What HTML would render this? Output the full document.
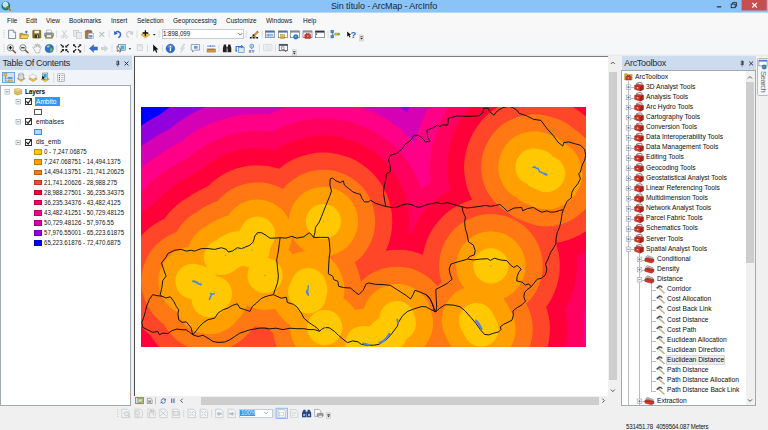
<!DOCTYPE html>
<html><head><meta charset="utf-8"><title>Sin título - ArcMap - ArcInfo</title>
<style>
*{box-sizing:border-box;margin:0;padding:0}
html,body{width:768px;height:430px;overflow:hidden;background:#f0f0f0;font-family:"Liberation Sans",sans-serif;color:#111}
.abs{position:absolute}
#titlebar{left:0;top:0;width:768px;height:13px;background:linear-gradient(#8ac3f7 12px,#b6d8f7 12px)}
#title{left:0;top:0;width:768px;text-align:center;font-size:9px;line-height:12.6px;color:#1c2836;letter-spacing:-0.12px}
#menubar{left:0;top:13px;width:768px;height:14px;background:#f8f8f8}
.mi{position:absolute;top:14.7px;font-size:7.4px;line-height:11px;color:#161616;white-space:nowrap;transform:scaleX(.875);transform-origin:0 0}
#tb{left:0;top:27px;width:768px;height:28px;background:linear-gradient(#f8f8f9,#f5f6f8)}
.phead{background:#ccdcee;font-size:9px;line-height:15px;overflow:hidden;color:#1f2c3c;padding-left:2.6px;white-space:nowrap;letter-spacing:-0.28px}
.t{position:absolute;font-size:7.3px;line-height:10px;height:10px;white-space:nowrap;color:#0c0c0c;transform:scaleX(.915);transform-origin:0 0}
.n{position:absolute;font-size:6.6px;line-height:10px;height:10px;white-space:nowrap;color:#151515;transform:scaleX(.925);transform-origin:0 0}
.sw{position:absolute;left:34px;width:8px;height:5.6px;border:0.6px solid rgba(0,0,0,.25)}
.pm{position:absolute;width:5px;height:5px;border:0.6px solid #a9b0b9;background:#fcfcfd}
.pm:before{content:"";position:absolute;left:0.8px;top:1.6px;width:2.2px;height:0.6px;background:#4860a8}
.pm.plus:after{content:"";position:absolute;left:1.6px;top:0.8px;width:0.6px;height:2.2px;background:#4860a8}
.cb{position:absolute;width:7px;height:7px;border:0.8px solid #333;background:#fff}
.sep{position:absolute;width:0.6px;background:#c3c7cc}
</style></head><body>
<div id="titlebar" class="abs"></div>
<div id="title" class="abs">Sin título - ArcMap - ArcInfo</div>
<div id="menubar" class="abs"></div>
<div class="mi" style="left:7px">File</div>
<div class="mi" style="left:26px">Edit</div>
<div class="mi" style="left:46px">View</div>
<div class="mi" style="left:69px">Bookmarks</div>
<div class="mi" style="left:111px">Insert</div>
<div class="mi" style="left:137px">Selection</div>
<div class="mi" style="left:173px">Geoprocessing</div>
<div class="mi" style="left:226px">Customize</div>
<div class="mi" style="left:266px">Windows</div>
<div class="mi" style="left:303px">Help</div>
<div id="tb" class="abs"></div>
<div class="abs" style="left:0;top:54px;width:768px;height:2.4px;background:linear-gradient(#f3f4f6,#e3e5e9)"></div>
<div class="abs" style="left:161.7px;top:28.7px;width:82.6px;height:10.6px;background:#fff;border:0.7px solid #c6ccd4"></div>
<div class="n" style="left:163.4px;top:29px;font-size:6.6px">1:898,099</div>
<div class="abs phead" style="left:0;top:56.4px;width:131.6px;height:14px">Table Of Contents</div>
<div class="abs" style="left:0;top:70.4px;width:131px;height:15px;background:#f1f4f8"></div>
<div class="abs" style="left:2.2px;top:71.5px;width:12.4px;height:11.8px;background:#cfe3f8;border:0.7px solid #6aa7e0"></div>
<div class="abs" id="toc" style="left:0.3px;top:84.8px;width:130.6px;height:321px;background:#fff;border:0.8px solid #a3a9b1"></div>
<div class="t" style="left:25.4px;top:87.1px;font-weight:bold;letter-spacing:-0.2px;font-size:7.1px">Layers</div>
<div class="cb" style="left:25px;top:98.0px"></div>
<div class="abs" style="left:35px;top:96.7px;width:24.6px;height:9.6px;background:#3595f5"></div>
<div class="n" style="left:36.4px;top:96.6px;color:#fff;font-size:7.1px">Ambito</div>
<div class="abs" style="left:34px;top:108.6px;width:8px;height:6.2px;background:#fff;border:0.8px solid #555"></div>
<div class="cb" style="left:25px;top:118.1px"></div>
<div class="n" style="left:36px;top:116.7px;font-size:7.1px">embalses</div>
<div class="abs" style="left:34px;top:129px;width:8px;height:6.2px;background:#a9dcf3;border:0.8px solid #4a86e0"></div>
<div class="cb" style="left:25px;top:138.8px"></div>
<div class="n" style="left:36px;top:137.4px;font-size:7.1px">dis_emb</div>
<div class="sw" style="top:149.3px;background:#ffc800"></div>
<div class="n" style="left:43.9px;top:147.1px">0 - 7,247.06875</div>
<div class="sw" style="top:159.4px;background:#ffa000"></div>
<div class="n" style="left:43.9px;top:157.2px">7,247.068751 - 14,494.1375</div>
<div class="sw" style="top:169.5px;background:#ff7814"></div>
<div class="n" style="left:43.9px;top:167.3px">14,494.13751 - 21,741.20625</div>
<div class="sw" style="top:179.7px;background:#ff4628"></div>
<div class="n" style="left:43.9px;top:177.5px">21,741.20626 - 28,988.275</div>
<div class="sw" style="top:189.8px;background:#ff0038"></div>
<div class="n" style="left:43.9px;top:187.6px">28,988.27501 - 36,235.34375</div>
<div class="sw" style="top:199.9px;background:#ff005e"></div>
<div class="n" style="left:43.9px;top:197.7px">36,235.34376 - 43,482.4125</div>
<div class="sw" style="top:210.0px;background:#ff0086"></div>
<div class="n" style="left:43.9px;top:207.8px">43,482.41251 - 50,729.48125</div>
<div class="sw" style="top:220.1px;background:#d600b4"></div>
<div class="n" style="left:43.9px;top:217.9px">50,729.48126 - 57,976.55</div>
<div class="sw" style="top:230.3px;background:#9200de"></div>
<div class="n" style="left:43.9px;top:228.1px">57,976.55001 - 65,223.61875</div>
<div class="sw" style="top:240.4px;background:#0000ff"></div>
<div class="n" style="left:43.9px;top:238.2px">65,223.61876 - 72,470.6875</div>
<div class="abs" id="mapwin" style="left:133.6px;top:56.4px;width:474.8px;height:340.2px;background:#fff;border-left:1.2px solid #4a4a4a;border-top:0.9px solid #7a7a7a"></div>
<svg class="abs" id="map" style="left:141px;top:107px" width="445" height="239.6" viewBox="141 107 445 239.6">
<rect x="141" y="107" width="445" height="239.6" fill="#0000ff"/>
<g fill="none" stroke-linecap="round" stroke-linejoin="round">
<path d="M533.0 167.3 L538.0 168.5 L540.0 172.0 L546.6 174.6M533.6 166.0 L538.8 167.2 L541.0 170.6 L547.6 173.6M490.9 265.9 L490.91 265.9M476.5 320.5 L481.0 329.0M397.0 318.6 L398.4 323.4M379.0 343.6 L384.0 339.0 L389.8 333.4 L388.4 333.0 L383.0 338.0 L379.0 342.4M363.0 343.5 L369.5 345.0M324.8 327.5 L324.81 327.5M308.5 285.6 L309.8 290.0 L305.6 292.0 L308.5 295.8M265.0 275.4 L265.01 275.4M214.4 293.8 L210.5 293.4 L211.0 296.0 L209.3 299.6M193.0 281.3 L197.0 282.5 L201.0 284.5M323.4 221.5 L323.41 221.5M257.5 234.2 L253.1 243.0 L252.0 250.1 L244.7 248.0 L241.3 248.6 L236.1 249.1 L229.3 252.4 L225.6 255.4 L221.5 257.5" stroke="#9200de" stroke-width="308.8"/>
<path d="M533.0 167.3 L538.0 168.5 L540.0 172.0 L546.6 174.6M533.6 166.0 L538.8 167.2 L541.0 170.6 L547.6 173.6M490.9 265.9 L490.91 265.9M476.5 320.5 L481.0 329.0M397.0 318.6 L398.4 323.4M379.0 343.6 L384.0 339.0 L389.8 333.4 L388.4 333.0 L383.0 338.0 L379.0 342.4M363.0 343.5 L369.5 345.0M324.8 327.5 L324.81 327.5M308.5 285.6 L309.8 290.0 L305.6 292.0 L308.5 295.8M265.0 275.4 L265.01 275.4M214.4 293.8 L210.5 293.4 L211.0 296.0 L209.3 299.6M193.0 281.3 L197.0 282.5 L201.0 284.5M323.4 221.5 L323.41 221.5M257.5 234.2 L253.1 243.0 L252.0 250.1 L244.7 248.0 L241.3 248.6 L236.1 249.1 L229.3 252.4 L225.6 255.4 L221.5 257.5" stroke="#d600b4" stroke-width="274.6"/>
<path d="M533.0 167.3 L538.0 168.5 L540.0 172.0 L546.6 174.6M533.6 166.0 L538.8 167.2 L541.0 170.6 L547.6 173.6M490.9 265.9 L490.91 265.9M476.5 320.5 L481.0 329.0M397.0 318.6 L398.4 323.4M379.0 343.6 L384.0 339.0 L389.8 333.4 L388.4 333.0 L383.0 338.0 L379.0 342.4M363.0 343.5 L369.5 345.0M324.8 327.5 L324.81 327.5M308.5 285.6 L309.8 290.0 L305.6 292.0 L308.5 295.8M265.0 275.4 L265.01 275.4M214.4 293.8 L210.5 293.4 L211.0 296.0 L209.3 299.6M193.0 281.3 L197.0 282.5 L201.0 284.5M323.4 221.5 L323.41 221.5M257.5 234.2 L253.1 243.0 L252.0 250.1 L244.7 248.0 L241.3 248.6 L236.1 249.1 L229.3 252.4 L225.6 255.4 L221.5 257.5" stroke="#ff0086" stroke-width="240.4"/>
<path d="M533.0 167.3 L538.0 168.5 L540.0 172.0 L546.6 174.6M533.6 166.0 L538.8 167.2 L541.0 170.6 L547.6 173.6M490.9 265.9 L490.91 265.9M476.5 320.5 L481.0 329.0M397.0 318.6 L398.4 323.4M379.0 343.6 L384.0 339.0 L389.8 333.4 L388.4 333.0 L383.0 338.0 L379.0 342.4M363.0 343.5 L369.5 345.0M324.8 327.5 L324.81 327.5M308.5 285.6 L309.8 290.0 L305.6 292.0 L308.5 295.8M265.0 275.4 L265.01 275.4M214.4 293.8 L210.5 293.4 L211.0 296.0 L209.3 299.6M193.0 281.3 L197.0 282.5 L201.0 284.5M323.4 221.5 L323.41 221.5M257.5 234.2 L253.1 243.0 L252.0 250.1 L244.7 248.0 L241.3 248.6 L236.1 249.1 L229.3 252.4 L225.6 255.4 L221.5 257.5" stroke="#ff005e" stroke-width="206.2"/>
<path d="M533.0 167.3 L538.0 168.5 L540.0 172.0 L546.6 174.6M533.6 166.0 L538.8 167.2 L541.0 170.6 L547.6 173.6M490.9 265.9 L490.91 265.9M476.5 320.5 L481.0 329.0M397.0 318.6 L398.4 323.4M379.0 343.6 L384.0 339.0 L389.8 333.4 L388.4 333.0 L383.0 338.0 L379.0 342.4M363.0 343.5 L369.5 345.0M324.8 327.5 L324.81 327.5M308.5 285.6 L309.8 290.0 L305.6 292.0 L308.5 295.8M265.0 275.4 L265.01 275.4M214.4 293.8 L210.5 293.4 L211.0 296.0 L209.3 299.6M193.0 281.3 L197.0 282.5 L201.0 284.5M323.4 221.5 L323.41 221.5M257.5 234.2 L253.1 243.0 L252.0 250.1 L244.7 248.0 L241.3 248.6 L236.1 249.1 L229.3 252.4 L225.6 255.4 L221.5 257.5" stroke="#ff0038" stroke-width="172.0"/>
<path d="M533.0 167.3 L538.0 168.5 L540.0 172.0 L546.6 174.6M533.6 166.0 L538.8 167.2 L541.0 170.6 L547.6 173.6M490.9 265.9 L490.91 265.9M476.5 320.5 L481.0 329.0M397.0 318.6 L398.4 323.4M379.0 343.6 L384.0 339.0 L389.8 333.4 L388.4 333.0 L383.0 338.0 L379.0 342.4M363.0 343.5 L369.5 345.0M324.8 327.5 L324.81 327.5M308.5 285.6 L309.8 290.0 L305.6 292.0 L308.5 295.8M265.0 275.4 L265.01 275.4M214.4 293.8 L210.5 293.4 L211.0 296.0 L209.3 299.6M193.0 281.3 L197.0 282.5 L201.0 284.5M323.4 221.5 L323.41 221.5M257.5 234.2 L253.1 243.0 L252.0 250.1 L244.7 248.0 L241.3 248.6 L236.1 249.1 L229.3 252.4 L225.6 255.4 L221.5 257.5" stroke="#ff4628" stroke-width="137.8"/>
<path d="M533.0 167.3 L538.0 168.5 L540.0 172.0 L546.6 174.6M533.6 166.0 L538.8 167.2 L541.0 170.6 L547.6 173.6M490.9 265.9 L490.91 265.9M476.5 320.5 L481.0 329.0M397.0 318.6 L398.4 323.4M379.0 343.6 L384.0 339.0 L389.8 333.4 L388.4 333.0 L383.0 338.0 L379.0 342.4M363.0 343.5 L369.5 345.0M324.8 327.5 L324.81 327.5M308.5 285.6 L309.8 290.0 L305.6 292.0 L308.5 295.8M265.0 275.4 L265.01 275.4M214.4 293.8 L210.5 293.4 L211.0 296.0 L209.3 299.6M193.0 281.3 L197.0 282.5 L201.0 284.5M323.4 221.5 L323.41 221.5M257.5 234.2 L253.1 243.0 L252.0 250.1 L244.7 248.0 L241.3 248.6 L236.1 249.1 L229.3 252.4 L225.6 255.4 L221.5 257.5" stroke="#ff7814" stroke-width="103.6"/>
<path d="M533.0 167.3 L538.0 168.5 L540.0 172.0 L546.6 174.6M533.6 166.0 L538.8 167.2 L541.0 170.6 L547.6 173.6M490.9 265.9 L490.91 265.9M476.5 320.5 L481.0 329.0M397.0 318.6 L398.4 323.4M379.0 343.6 L384.0 339.0 L389.8 333.4 L388.4 333.0 L383.0 338.0 L379.0 342.4M363.0 343.5 L369.5 345.0M324.8 327.5 L324.81 327.5M308.5 285.6 L309.8 290.0 L305.6 292.0 L308.5 295.8M265.0 275.4 L265.01 275.4M214.4 293.8 L210.5 293.4 L211.0 296.0 L209.3 299.6M193.0 281.3 L197.0 282.5 L201.0 284.5M323.4 221.5 L323.41 221.5M257.5 234.2 L253.1 243.0 L252.0 250.1 L244.7 248.0 L241.3 248.6 L236.1 249.1 L229.3 252.4 L225.6 255.4 L221.5 257.5" stroke="#ffa000" stroke-width="69.4"/>
<path d="M533.0 167.3 L538.0 168.5 L540.0 172.0 L546.6 174.6M533.6 166.0 L538.8 167.2 L541.0 170.6 L547.6 173.6M490.9 265.9 L490.91 265.9M476.5 320.5 L481.0 329.0M397.0 318.6 L398.4 323.4M379.0 343.6 L384.0 339.0 L389.8 333.4 L388.4 333.0 L383.0 338.0 L379.0 342.4M363.0 343.5 L369.5 345.0M324.8 327.5 L324.81 327.5M308.5 285.6 L309.8 290.0 L305.6 292.0 L308.5 295.8M265.0 275.4 L265.01 275.4M214.4 293.8 L210.5 293.4 L211.0 296.0 L209.3 299.6M193.0 281.3 L197.0 282.5 L201.0 284.5M323.4 221.5 L323.41 221.5M257.5 234.2 L253.1 243.0 L252.0 250.1 L244.7 248.0 L241.3 248.6 L236.1 249.1 L229.3 252.4 L225.6 255.4 L221.5 257.5" stroke="#ffc800" stroke-width="35.2"/>
</g>
<path d="M385.8 206.5 L384.6 200.2 L383.5 193.5 L384.1 186.8 L385.8 180.1 L386.3 174.2 L390.2 171.7 L390.5 166.7 L388.5 160.0 L390.4 155.3 L396.8 153.3 L401.8 149.4 L405.1 144.4 L411.0 140.2 L413.5 136.0 L417.7 135.2 L421.9 137.7 L425.6 141.9 L430.3 141.0 L427.7 137.7 L426.9 130.2 L433.6 127.6 L437.8 124.8 L439.5 126.8 L442.8 124.8 L447.8 125.1 L448.3 118.4 L457.1 115.9 L467.1 116.4 L478.8 115.9 L483.0 112.6 L483.5 108.4 L488.0 108.0 L489.7 111.7 L493.9 115.1 L497.3 110.9 L502.3 108.0 L505.0 107.0 L509.2 106.4 L512.6 107.5 L516.8 110.1 L519.3 113.4 L526.8 115.9 L533.5 119.3 L541.0 120.4 L546.9 128.5 L553.6 136.0 L557.8 141.9 L562.8 146.1 L563.7 142.7 L568.7 141.9 L575.4 143.9 L580.4 145.2 L584.6 149.4 L585.8 155.3 L584.6 160.3 L582.1 165.3 L580.4 172.0 L578.7 173.7 L580.4 178.7 L577.9 183.7 L573.7 188.8 L571.7 192.9 L571.2 198.0 L567.0 201.3 L564.5 207.2 L563.3 209.7 L562.0 213.9 L561.1 220.6 L559.5 227.3 L557.3 232.3 L556.1 238.2 L555.8 244.0 L553.9 247.4 L550.6 252.4 L548.0 259.1 L545.5 264.1 L546.9 269.1 L545.5 275.0 L541.3 278.3 L537.2 279.2 L533.8 283.4 L531.3 286.7 L527.1 289.6 L524.6 292.6 L523.8 296.8 L525.4 301.3 L522.1 304.7 L517.1 307.7 L512.9 311.0 L513.4 315.1 L512.0 320.2 L507.0 322.7 L503.7 324.3 L500.3 326.9 L501.1 329.4 L498.6 331.9 L493.6 333.2 L488.6 334.9 L484.4 334.4 L480.2 329.4 L476.0 323.5 L471.0 317.6 L465.1 310.9 L460.1 306.8 L453.4 305.1 L446.7 304.7 L444.5 305.1 L439.3 308.6 L435.8 311.8 L430.6 309.5 L426.2 306.9 L421.9 306.5 L414.9 308.6 L407.9 311.2 L402.7 315.6 L398.3 322.6 L397.4 326.1 L392.2 333.0 L387.0 339.1 L384.1 340.9 L378.9 344.4 L373.6 345.2 L366.7 345.2 L361.4 344.4 L357.9 341.8 L352.7 340.9 L347.5 342.6 L344.0 340.0 L338.8 335.7 L334.4 331.3 L329.2 327.8 L324.8 327.5 L321.3 329.6 L319.6 331.3 L314.3 329.6 L309.1 329.6 L303.9 328.7 L296.9 328.7 L289.9 328.2 L283.0 329.6 L276.0 328.2 L269.0 328.9 L265.0 328.1 L259.9 328.1 L254.9 329.0 L249.9 329.8 L244.9 331.5 L239.8 333.1 L234.8 336.5 L229.8 339.8 L224.8 342.0 L218.1 342.4 L213.0 341.5 L208.0 338.2 L203.0 335.3 L198.0 336.5 L192.9 334.8 L189.6 332.3 L186.2 329.8 L182.0 329.8 L177.0 329.0 L172.0 330.6 L167.8 333.6 L162.8 333.1 L159.4 334.8 L157.8 331.5 L152.7 332.3 L147.7 329.8 L142.7 327.3 L141.8 322.3 L143.5 318.1 L145.2 312.2 L146.9 305.5 L149.4 299.6 L152.7 294.6 L156.1 295.5 L161.9 296.3 L160.3 294.6 L161.9 287.1 L162.8 280.4 L166.1 276.2 L164.5 272.0 L161.5 263.0 L166.1 257.0 L167.8 253.6 L174.5 250.3 L181.2 249.4 L186.2 251.1 L191.3 250.3 L194.6 251.1 L201.3 248.6 L208.0 248.6 L214.7 249.4 L221.4 247.7 L226.4 249.4 L228.1 251.9 L232.3 251.1 L237.3 247.7 L241.5 248.6 L245.7 246.9 L249.9 245.2 L253.2 241.9 L254.9 236.0 L257.4 232.7 L261.6 232.7 L265.8 235.2 L270.0 238.2 L275.0 238.1 L280.1 237.7 L285.9 238.1 L291.8 236.4 L296.8 238.1 L303.5 236.9 L309.4 232.7 L311.9 235.2 L313.6 237.4 L314.9 232.7 L315.5 227.3 L319.3 222.0 L322.7 213.6 L326.0 205.2 L329.4 196.9 L331.5 191.0 L329.9 185.1 L330.2 178.8 L332.7 178.1 L336.1 180.9 L340.3 182.6 L343.3 180.9 L344.4 185.1 L348.6 188.5 L352.8 191.8 L357.0 193.5 L360.4 194.3 L362.0 198.5 L364.5 201.9 L368.7 201.9 L370.4 200.2 L375.4 203.2 L381.3 205.2 L385.8 206.5M385.8 206.5 L391.7 207.5 L396.8 207.2 L401.8 205.2 L406.8 203.8 L411.8 204.7 L416.0 206.8 L420.2 207.2 L425.2 205.2 L430.3 203.8 L437.0 202.7 L442.0 203.8 L447.0 202.7 L452.0 203.8 L457.1 205.5 L462.1 206.8 L467.1 208.0 L473.8 207.2 L480.5 206.3 L485.5 205.5 L490.6 206.3 L495.6 205.5 L499.8 204.4 L503.7 207.6 L507.5 211.4 L514.2 208.0 L521.8 207.5 L522.6 210.9 L527.6 208.5 L533.5 207.5 L537.7 210.2 L541.9 212.2 L546.9 210.9 L550.3 212.2 L555.3 211.9 L559.5 210.5 L563.3 209.7M462.1 206.8 L462.9 211.4 L465.4 217.2 L464.6 222.3 L465.4 229.0 L467.1 234.0 L467.9 239.0 L468.6 242.0 L473.3 245.0 L475.2 250.7 L474.3 254.9 L469.3 256.6 L467.6 259.1 L461.8 260.8 L455.9 262.4 L450.9 264.1 L449.2 269.1 L450.1 274.2 L452.1 279.2 L447.3 283.4 L441.0 286.8 L435.8 289.4 L436.2 298.2 L436.7 306.9 L435.8 311.8M467.6 259.1 L473.5 259.9 L480.2 259.1 L487.7 258.7 L490.3 260.4 L494.4 258.2 L500.3 259.9 L507.0 260.8 L510.4 264.9 L513.7 267.5 L517.1 265.4 L521.2 269.1 L518.7 272.5 L517.1 276.7 L516.7 280.9 L522.1 282.2 L525.4 285.0 L528.8 283.9 L531.3 286.7M435.8 311.8 L434.1 311.2 L433.2 306.0 L430.6 299.9 L426.2 294.7 L420.1 292.1 L414.9 290.3 L413.1 294.7 L410.5 299.0 L406.2 295.5 L400.9 292.1 L394.0 287.7 L390.6 285.5 L383.9 284.6 L375.5 284.3 L368.8 283.0 L366.3 283.8 L363.0 290.5 L358.8 294.7 L355.4 292.2 L350.4 288.0 L343.7 287.6 L338.7 286.3 L337.8 281.3 L333.7 279.6 L332.8 276.3 L328.3 273.7 L328.6 267.9 L329.0 259.5 L330.0 251.1 L329.5 242.8 L328.6 237.4 L320.3 237.4 L313.6 237.4M426.2 294.7 L429.5 297.5 L432.0 303.0 L434.3 309.0 L435.8 311.8M280.1 237.7 L279.2 244.4 L278.4 251.1 L276.7 259.5 L277.5 267.9 L278.4 276.3 L277.5 283.0 L275.0 289.7 L273.4 294.7 L281.2 298.2 L286.4 297.3 L287.3 302.5 L293.4 304.3 L296.9 306.9 L301.3 313.0 L303.9 318.2 L309.1 322.6 L314.3 326.1 L317.8 328.7 L319.6 331.3M273.4 294.7 L269.0 295.6 L265.0 296.8 L260.8 298.8 L256.6 303.0 L252.4 306.3 L249.9 311.4 L244.9 309.7 L239.8 308.0 L237.3 303.8 L232.3 305.5 L228.1 308.0 L223.1 309.7 L218.1 313.0 L214.7 318.1 L208.0 319.7 L203.8 322.3 L199.6 326.4 L196.3 330.6 L192.9 334.8M161.9 296.3 L166.1 298.0 L170.3 296.8 L173.7 301.3 L176.2 306.3 L178.7 309.7 L177.9 313.9 L178.7 319.7 L182.0 322.3 L186.2 321.9 L188.7 324.8 L191.3 328.1 L192.1 332.3 L192.9 334.8" fill="none" stroke="#0c0c0c" stroke-width="0.95" stroke-linejoin="round"/>
<path d="M533 167.3L535 167L536.5 168.6L538 168.3L539.5 171.5L542 172.6L546.4 174.5" fill="none" stroke="#4d84ea" stroke-width="1.5" stroke-linecap="round" stroke-linejoin="round"/>
<path d="M544.5 174L546.6 174.7" fill="none" stroke="#4d84ea" stroke-width="2.2" stroke-linecap="round" stroke-linejoin="round"/>
<path d="M193 281.3L196 282L198.4 283.6L201 284.5" fill="none" stroke="#4d84ea" stroke-width="1.9" stroke-linecap="round" stroke-linejoin="round"/>
<path d="M214.4 293.8L211.6 294.4L210.5 293.4M211.6 294.4L210.4 297L209.3 299.6" fill="none" stroke="#4d84ea" stroke-width="1.5" stroke-linecap="round" stroke-linejoin="round"/>
<path d="M308.3 286L308 290L306.6 292.2L308.5 295.5" fill="none" stroke="#4d84ea" stroke-width="1.4" stroke-linecap="round" stroke-linejoin="round"/>
<path d="M307 291L308 294" fill="none" stroke="#4d84ea" stroke-width="2" stroke-linecap="round" stroke-linejoin="round"/>
<path d="M379.5 343L384 340.6L387 337.6L389.3 334" fill="none" stroke="#4d84ea" stroke-width="2.1" stroke-linecap="round" stroke-linejoin="round"/>
<path d="M363 343.5L369.5 345" fill="none" stroke="#4d84ea" stroke-width="1.8" stroke-linecap="round" stroke-linejoin="round"/>
<path d="M476.2 320.6L479 324.2L481.4 329" fill="none" stroke="#4d84ea" stroke-width="2.3" stroke-linecap="round" stroke-linejoin="round"/>
<path d="M397.3 319.3L398 323" fill="none" stroke="#4d84ea" stroke-width="1.7" stroke-linecap="round" stroke-linejoin="round"/>
<path d="M324.3 327.5L325.3 327.5" fill="none" stroke="#4d84ea" stroke-width="1.6" stroke-linecap="round" stroke-linejoin="round"/>
<circle cx="490.9" cy="265.9" r="0.55" fill="#5b86d8"/>
<circle cx="323.4" cy="221.5" r="0.55" fill="#5b86d8"/>
<circle cx="265" cy="275.4" r="0.55" fill="#5b86d8"/>
<circle cx="257.5" cy="234.2" r="0.55" fill="#5b86d8"/>
<circle cx="253.1" cy="243" r="0.55" fill="#5b86d8"/>
<circle cx="252" cy="250.1" r="0.55" fill="#5b86d8"/>
<circle cx="244.7" cy="248" r="0.55" fill="#5b86d8"/>
<circle cx="241.3" cy="248.6" r="0.55" fill="#5b86d8"/>
<circle cx="236.1" cy="249.1" r="0.55" fill="#5b86d8"/>
<circle cx="229.3" cy="252.4" r="0.55" fill="#5b86d8"/>
<circle cx="225.6" cy="255.4" r="0.55" fill="#5b86d8"/>
</svg>
<div class="abs" style="left:608.4px;top:57.4px;width:8.8px;height:339px;background:#f0f0f0"></div>
<div class="abs" style="left:608.6px;top:72px;width:8.4px;height:308px;background:#cdcdcd"></div>
<div class="abs" style="left:134px;top:396.4px;width:483px;height:9.4px;background:#f0f0f0"></div>
<div class="abs" style="left:201.3px;top:397px;width:397.4px;height:7.6px;background:#cdcdcd"></div>
<div class="abs" style="left:135.4px;top:396.8px;width:9px;height:7.6px;background:#cfe3f8;border:0.7px solid #5a9be0"></div>
<div class="abs phead" style="left:621.6px;top:56.4px;width:134.4px;height:14px">ArcToolbox</div>
<div class="abs" id="atb" style="left:621.4px;top:70.4px;width:134.6px;height:335.6px;background:#fff;border:0.8px solid #a3a9b1"></div>
<div class="abs" style="left:745.6px;top:71.2px;width:9.4px;height:334px;background:#f0f0f0"></div>
<div class="abs" style="left:745.9px;top:81.5px;width:8.2px;height:181.5px;background:#cdcdcd"></div>
<div class="abs" style="left:628.1px;top:81px;width:0.6px;height:324px;background:#bcbcbc"></div>
<div class="abs" style="left:639.1px;top:253px;width:0.6px;height:152px;background:#bcbcbc"></div>
<div class="abs" style="left:650.7px;top:283px;width:0.6px;height:108px;background:#bcbcbc"></div>
<div class="t" style="left:635.1px;top:71.9px">ArcToolbox</div>
<div class="abs" style="left:631px;top:87.3px;width:3px;height:0.5px;background:#bcbcbc"></div>
<div class="t" style="left:646px;top:81.5px">3D Analyst Tools</div>
<div class="abs" style="left:631px;top:97.5px;width:3px;height:0.5px;background:#bcbcbc"></div>
<div class="t" style="left:646px;top:91.7px">Analysis Tools</div>
<div class="abs" style="left:631px;top:107.6px;width:3px;height:0.5px;background:#bcbcbc"></div>
<div class="t" style="left:646px;top:101.8px">Arc Hydro Tools</div>
<div class="abs" style="left:631px;top:117.7px;width:3px;height:0.5px;background:#bcbcbc"></div>
<div class="t" style="left:646px;top:111.9px">Cartography Tools</div>
<div class="abs" style="left:631px;top:127.9px;width:3px;height:0.5px;background:#bcbcbc"></div>
<div class="t" style="left:646px;top:122.1px">Conversion Tools</div>
<div class="abs" style="left:631px;top:138.0px;width:3px;height:0.5px;background:#bcbcbc"></div>
<div class="t" style="left:646px;top:132.2px">Data Interoperability Tools</div>
<div class="abs" style="left:631px;top:148.1px;width:3px;height:0.5px;background:#bcbcbc"></div>
<div class="t" style="left:646px;top:142.3px">Data Management Tools</div>
<div class="abs" style="left:631px;top:158.2px;width:3px;height:0.5px;background:#bcbcbc"></div>
<div class="t" style="left:646px;top:152.4px">Editing Tools</div>
<div class="abs" style="left:631px;top:168.4px;width:3px;height:0.5px;background:#bcbcbc"></div>
<div class="t" style="left:646px;top:162.6px">Geocoding Tools</div>
<div class="abs" style="left:631px;top:178.5px;width:3px;height:0.5px;background:#bcbcbc"></div>
<div class="t" style="left:646px;top:172.7px">Geostatistical Analyst Tools</div>
<div class="abs" style="left:631px;top:188.6px;width:3px;height:0.5px;background:#bcbcbc"></div>
<div class="t" style="left:646px;top:182.8px">Linear Referencing Tools</div>
<div class="abs" style="left:631px;top:198.8px;width:3px;height:0.5px;background:#bcbcbc"></div>
<div class="t" style="left:646px;top:193.0px">Multidimension Tools</div>
<div class="abs" style="left:631px;top:208.9px;width:3px;height:0.5px;background:#bcbcbc"></div>
<div class="t" style="left:646px;top:203.1px">Network Analyst Tools</div>
<div class="abs" style="left:631px;top:219.0px;width:3px;height:0.5px;background:#bcbcbc"></div>
<div class="t" style="left:646px;top:213.2px">Parcel Fabric Tools</div>
<div class="abs" style="left:631px;top:229.2px;width:3px;height:0.5px;background:#bcbcbc"></div>
<div class="t" style="left:646px;top:223.4px">Schematics Tools</div>
<div class="abs" style="left:631px;top:239.3px;width:3px;height:0.5px;background:#bcbcbc"></div>
<div class="t" style="left:646px;top:233.5px">Server Tools</div>
<div class="abs" style="left:631px;top:249.4px;width:3px;height:0.5px;background:#bcbcbc"></div>
<div class="t" style="left:646px;top:243.6px">Spatial Analyst Tools</div>
<div class="abs" style="left:642px;top:259.5px;width:2.6px;height:0.5px;background:#bcbcbc"></div>
<div class="t" style="left:656.8px;top:253.7px">Conditional</div>
<div class="abs" style="left:642px;top:269.7px;width:2.6px;height:0.5px;background:#bcbcbc"></div>
<div class="t" style="left:656.8px;top:263.9px">Density</div>
<div class="abs" style="left:642px;top:279.8px;width:2.6px;height:0.5px;background:#bcbcbc"></div>
<div class="t" style="left:656.8px;top:274.0px">Distance</div>
<div class="abs" style="left:651px;top:290.1px;width:5px;height:0.5px;background:#bcbcbc"></div>
<div class="t" style="left:667px;top:284.1px">Corridor</div>
<div class="abs" style="left:651px;top:300.3px;width:5px;height:0.5px;background:#bcbcbc"></div>
<div class="t" style="left:667px;top:294.3px">Cost Allocation</div>
<div class="abs" style="left:651px;top:310.4px;width:5px;height:0.5px;background:#bcbcbc"></div>
<div class="t" style="left:667px;top:304.4px">Cost Back Link</div>
<div class="abs" style="left:651px;top:320.5px;width:5px;height:0.5px;background:#bcbcbc"></div>
<div class="t" style="left:667px;top:314.5px">Cost Distance</div>
<div class="abs" style="left:651px;top:330.6px;width:5px;height:0.5px;background:#bcbcbc"></div>
<div class="t" style="left:667px;top:324.6px">Cost Path</div>
<div class="abs" style="left:651px;top:340.8px;width:5px;height:0.5px;background:#bcbcbc"></div>
<div class="t" style="left:667px;top:334.8px">Euclidean Allocation</div>
<div class="abs" style="left:651px;top:350.9px;width:5px;height:0.5px;background:#bcbcbc"></div>
<div class="t" style="left:667px;top:344.9px">Euclidean Direction</div>
<div class="abs" style="left:651px;top:361.0px;width:5px;height:0.5px;background:#bcbcbc"></div>
<div class="abs" style="left:666.3px;top:355.1px;width:58.4px;height:9.8px;background:#ececec;border:0.5px solid #dadada"></div>
<div class="t" style="left:667px;top:355.0px">Euclidean Distance</div>
<div class="abs" style="left:651px;top:371.2px;width:5px;height:0.5px;background:#bcbcbc"></div>
<div class="t" style="left:667px;top:365.2px">Path Distance</div>
<div class="abs" style="left:651px;top:381.3px;width:5px;height:0.5px;background:#bcbcbc"></div>
<div class="t" style="left:667px;top:375.3px">Path Distance Allocation</div>
<div class="abs" style="left:651px;top:391.4px;width:5px;height:0.5px;background:#bcbcbc"></div>
<div class="t" style="left:667px;top:385.4px">Path Distance Back Link</div>
<div class="abs" style="left:642px;top:401.4px;width:2.6px;height:0.5px;background:#bcbcbc"></div>
<div class="t" style="left:656.8px;top:395.6px">Extraction</div>
<div class="abs" style="left:757.4px;top:57.5px;width:12px;height:38.4px;background:#f4f6f9;border:0.7px solid #b4bcc6;border-radius:1.5px"></div>
<div class="abs" style="left:758.6px;top:70.8px;width:8px;height:24px;font-size:7.6px;line-height:8px;color:#6c6c6c;writing-mode:vertical-rl;letter-spacing:-0.45px">Search</div>
<div class="n" style="left:626.4px;top:421.6px;letter-spacing:-0.22px">531451.78&nbsp; 4059564.087 Meters</div>
<div class="abs" style="left:238.8px;top:408.6px;width:34.4px;height:9px;background:#fff;border:0.6px solid #c5ccd4"></div>
<div class="abs" style="left:240px;top:409.6px;width:14.8px;height:6.8px;background:#3399ff"></div>
<div class="n" style="left:240.6px;top:408.2px;color:#dfeeff;font-size:6.3px">100%</div>
<svg class="abs" style="left:0;top:0" width="768" height="430" viewBox="0 0 768 430">
<rect x="3.3" y="30.2" width="1.3" height="0.7" fill="#b8bcc2"/>
<rect x="3.3" y="32.4" width="1.3" height="0.7" fill="#b8bcc2"/>
<rect x="3.3" y="34.6" width="1.3" height="0.7" fill="#b8bcc2"/>
<rect x="3.3" y="36.8" width="1.3" height="0.7" fill="#b8bcc2"/>
<g transform="translate(8.2 29.8)"><path d="M0.4 0.4h4.8l2.2 2.2v6.1h-7z" fill="#f3f8fe" stroke="#6d747c" stroke-width="0.8"/><path d="M5.2 0.4v2.2h2.2" fill="#dfe8f2" stroke="#6d747c" stroke-width="0.6"/></g>
<g transform="translate(19.6 29.8)"><path d="M0.2 8.7v-5.2h3l0.8 0.9h3.6v4.3z" fill="#c9a52c" stroke="#8e7418" stroke-width="0.5"/><path d="M0.2 8.7l1.6-3.6h7.4l-1.6 3.6z" fill="#f0d460" stroke="#9a7e1c" stroke-width="0.5"/><path d="M5 2.4l1.6-1.8l1.8 1.6l-0.9 0.1v1.2h-1.4v-1.1z" fill="#2a6fd6"/></g>
<g transform="translate(32.5 29.8)"><rect x="0.3" y="0.5" width="8" height="7.8" rx="0.6" fill="#8a7226" stroke="#5e4d14" stroke-width="0.6"/><rect x="2" y="0.9" width="4.6" height="2.6" fill="#f2efe2"/><rect x="2.2" y="5" width="4.2" height="3.1" fill="#3c3210"/><rect x="4.6" y="5.5" width="1" height="2.2" fill="#e6e0c8"/></g>
<g transform="translate(44.2 29.8)"><path d="M2.4 3.2v-2.9h4.2l0.9 0.9v2z" fill="#fff" stroke="#777" stroke-width="0.5"/><rect x="0.3" y="3.2" width="9" height="3.6" rx="0.8" fill="#9b9b9b" stroke="#5f5f5f" stroke-width="0.5"/><rect x="1.2" y="6" width="7.2" height="2.4" fill="#a4943c" stroke="#6e6324" stroke-width="0.4"/><rect x="2.6" y="5.2" width="4.4" height="2.2" fill="#e9f1fb" stroke="#7b8aa0" stroke-width="0.4"/><rect x="7.4" y="4" width="0.9" height="0.7" fill="#7be04a"/></g>
<line x1="56.7" y1="30.6" x2="56.7" y2="37.8" stroke="#c6c9cd" stroke-width="0.6"/>
<g transform="translate(60.3 29.8)"><path d="M2 0.5l3 5.2M6 0.5l-3 5.2" stroke="#c4c7cb" stroke-width="0.9" fill="none"/><circle cx="2.3" cy="7" r="1.3" fill="none" stroke="#c4c7cb" stroke-width="0.8"/><circle cx="5.9" cy="7" r="1.3" fill="none" stroke="#c4c7cb" stroke-width="0.8"/></g>
<g transform="translate(73.3 29.8)"><rect x="0.4" y="0.5" width="5" height="6" fill="#e4e6e8" stroke="#bfc3c7" stroke-width="0.6"/><rect x="3" y="2.5" width="5" height="6" fill="#e9ebed" stroke="#bfc3c7" stroke-width="0.6"/></g>
<g transform="translate(85 29.8)"><rect x="0.3" y="0.9" width="6.6" height="7.7" rx="0.5" fill="#b0763a" stroke="#7a4c1e" stroke-width="0.5"/><rect x="2" y="0.2" width="3.2" height="1.5" fill="#8c8c8c" stroke="#555" stroke-width="0.3"/><rect x="3.2" y="3.3" width="5" height="5.4" fill="#f2f7fd" stroke="#6f8db8" stroke-width="0.5"/><rect x="4" y="5.2" width="3.4" height="2.6" fill="#6aa0e6"/></g>
<g transform="translate(98.3 29.8)"><path d="M1 2l5 5M6 2l-5 5" stroke="#b9bcc0" stroke-width="1.1" fill="none"/></g>
<line x1="109.2" y1="30.6" x2="109.2" y2="37.8" stroke="#c6c9cd" stroke-width="0.6"/>
<g transform="translate(113.7 29.8)"><path d="M1.2 3.2c2.4-2.4 5.6-1.6 5.6 1.4c0 1.6-1 2.6-2.2 3.2" fill="none" stroke="#2f62c8" stroke-width="1.5"/><path d="M0.2 1.2l0.4 4l3.6-1.2z" fill="#2f62c8"/></g>
<g transform="translate(125.8 29.8)"><path d="M6.4 3.2c-2.4-2.4-5.6-1.6-5.6 1.4c0 1.6 1 2.6 2.2 3.2" fill="none" stroke="#c9ccd0" stroke-width="1.4"/><path d="M7.4 1.2l-0.4 4l-3.6-1.2z" fill="#c9ccd0"/></g>
<line x1="137" y1="30.6" x2="137" y2="37.8" stroke="#c6c9cd" stroke-width="0.6"/>
<g transform="translate(140.8 29.8)"><path d="M4.6 2.2l4.4 2.8l-4.4 3l-4.4-3z" fill="#f3c93a" stroke="#a8801a" stroke-width="0.5"/><path d="M4.6 0.4v6M1.8 3.2h5.6" stroke="#111" stroke-width="1.3"/></g>
<path d="M152.8 34h2.8l-1.4 1.6z" fill="#222"/>
<line x1="159.2" y1="30.6" x2="159.2" y2="37.8" stroke="#c6c9cd" stroke-width="0.6"/>
<path d="M238.4 33.2l1.9 1.9l1.9-1.9" fill="none" stroke="#444" stroke-width="0.8"/>
<line x1="246.3" y1="30.6" x2="246.3" y2="37.8" stroke="#c6c9cd" stroke-width="0.6"/>
<g transform="translate(249.7 29.8)"><path d="M3.6 5.4l4-4.2l1.2 1.1l-4 4.2l-1.8 0.6z" fill="#e0973a" stroke="#8a4a1a" stroke-width="0.4"/><path d="M7.3 1.5l1.1 1" stroke="#d23a2a" stroke-width="1"/><path d="M1 8l3-2.4M4 5.6l3.5 2.4M1 8h6.5" stroke="#222" stroke-width="0.5" fill="none"/><rect x="0.2" y="7.2" width="1.5" height="1.5" fill="#111"/><rect x="3.4" y="7.2" width="1.5" height="1.5" fill="#111"/><rect x="6.8" y="7.2" width="1.5" height="1.5" fill="#111"/><rect x="3" y="4.6" width="1.5" height="1.5" fill="#111"/></g>
<line x1="262.2" y1="30.6" x2="262.2" y2="37.8" stroke="#c6c9cd" stroke-width="0.6"/>
<g transform="translate(265 30.6)"><rect x="0.3" y="0.3" width="9" height="6.8" fill="#fff" stroke="#50627c" stroke-width="0.6"/><rect x="0.3" y="0.3" width="9" height="1.7" fill="#3b6fc4"/><rect x="1.2" y="3" width="7.2" height="3.2" fill="#cfe0f6"/><path d="M1.2 4.1h7.2M1.2 5.2h7.2M3.6 3v3.2" stroke="#3b6fc4" stroke-width="0.4"/></g>
<g transform="translate(278 30.6)"><rect x="0.3" y="0.3" width="9" height="6.8" fill="#fff" stroke="#50627c" stroke-width="0.6"/><rect x="0.3" y="0.3" width="9" height="1.7" fill="#4f6fa8"/><rect x="2.6" y="4" width="4" height="4" fill="#e8c53a" stroke="#8f7616" stroke-width="0.4"/><path d="M2.8 7.6l1.8-2.4l2 2.4" fill="#c9a320"/></g>
<g transform="translate(290 30.6)"><rect x="0.3" y="0.3" width="9" height="6.8" fill="#fff" stroke="#50627c" stroke-width="0.6"/><rect x="0.3" y="0.3" width="9" height="1.7" fill="#7f8894"/><circle cx="5.8" cy="6.2" r="2.4" fill="#2f7ed8" stroke="#1d4f94" stroke-width="0.4"/><path d="M4.6 5.2q1.2-0.8 2 0.4q-0.4 1.4-1.6 1z" fill="#6cc43a"/></g>
<g transform="translate(302.7 30.6)"><rect x="0.3" y="0.3" width="9" height="6.8" fill="#fff" stroke="#50627c" stroke-width="0.6"/><rect x="0.3" y="0.3" width="9" height="1.7" fill="#8a8f98"/><rect x="2" y="3.6" width="6" height="4.2" rx="0.6" fill="#d8382c" stroke="#8e1e16" stroke-width="0.4"/><rect x="3.6" y="2.8" width="2.8" height="1.2" fill="none" stroke="#8e1e16" stroke-width="0.5"/><rect x="4.4" y="5" width="1.3" height="1" fill="#f6d6d2"/></g>
<g transform="translate(315 30.6)"><rect x="0.3" y="0.3" width="9" height="6.8" fill="#fff" stroke="#50627c" stroke-width="0.6"/><rect x="0.3" y="0.3" width="9" height="1.7" fill="#2c3646"/><rect x="1.2" y="2.8" width="0.9" height="1.4" fill="#222"/></g>
<line x1="328" y1="30.6" x2="328" y2="37.8" stroke="#c6c9cd" stroke-width="0.6"/>
<g transform="translate(330.5 29.8)"><rect x="0.4" y="0.4" width="2.8" height="2.6" fill="#3e8fe0" stroke="#1d5aa6" stroke-width="0.4"/><rect x="0.4" y="5.6" width="2.8" height="2.6" fill="#3e8fe0" stroke="#1d5aa6" stroke-width="0.4"/><path d="M1.8 3v2.6M1.8 4.4h3.4" stroke="#333" stroke-width="0.5"/><rect x="4.6" y="3.2" width="2" height="2.2" fill="#e8c53a" stroke="#8f7616" stroke-width="0.3"/><ellipse cx="8" cy="4.3" rx="1.3" ry="1.2" fill="#5fc040" stroke="#2e7a1c" stroke-width="0.3"/></g>
<g transform="translate(346.7 29.8)"><path d="M0.4 1.6l0.2 5.4l1.3-1.3l1 2l0.9-0.5l-1-1.9l1.7-0.2z" fill="#111"/></g>
<text x="350.6" y="38.2" font-family="Liberation Sans, sans-serif" font-size="9.4" font-weight="bold" fill="#2f66cc">?</text>
<rect x="359.6" y="35" width="4" height="6" fill="#e3e3e3" stroke="#bdbdbd" stroke-width="0.4"/>
<rect x="360.40000000000003" y="36.5" width="2.4" height="0.7" fill="#222"/>
<path d="M360.3 38 h2.6 l-1.3 1.6z" fill="#222"/>
<rect x="3.3" y="44.4" width="1.3" height="0.7" fill="#b8bcc2"/>
<rect x="3.3" y="46.6" width="1.3" height="0.7" fill="#b8bcc2"/>
<rect x="3.3" y="48.8" width="1.3" height="0.7" fill="#b8bcc2"/>
<rect x="3.3" y="51.0" width="1.3" height="0.7" fill="#b8bcc2"/>
<g transform="translate(6.7 43.9)"><path d="M5.8 6l3 2.9" stroke="#9a4a2c" stroke-width="1.5" stroke-linecap="round"/><circle cx="3.7" cy="3.9" r="3.1" fill="#f4f7fa" stroke="#6e747c" stroke-width="0.8"/><path d="M1.9 3.9h3.6" stroke="#111" stroke-width="1.1"/><path d="M3.7 2.1v3.6" stroke="#111" stroke-width="1.1"/></g>
<g transform="translate(19.2 43.9)"><path d="M5.8 6l3 2.9" stroke="#9a4a2c" stroke-width="1.5" stroke-linecap="round"/><circle cx="3.7" cy="3.9" r="3.1" fill="#f4f7fa" stroke="#6e747c" stroke-width="0.8"/><path d="M1.9 3.9h3.6" stroke="#111" stroke-width="1.1"/></g>
<g transform="translate(32 43.9)"><path d="M2.2 5.2l-1.6-1.4l0.8-0.8l1.6 1v-3l1-0.4l0.5 2.4l0.3-3l1.1 0.1l0.1 2.9l0.8-2.4l1 0.3l-0.5 2.9l1.2-1.4l0.7 0.6l-1.4 3.2v2.6h-4.2z" fill="#f6f6f6" stroke="#8b8f95" stroke-width="0.5"/></g>
<g transform="translate(45 43.9)"><circle cx="4.3" cy="4.6" r="4.1" fill="#2c73d6" stroke="#1b4c96" stroke-width="0.5"/><path d="M2 2.2q1.6-1.4 3-0.4q-0.2 1.6-1.6 2q-1.6 0.2-1.4-1.6zM5.2 4.6q1.8-0.6 2.6 0.8q-0.4 2-2 2.4q-1.2-1-0.6-3.2z" fill="#74c43c"/><ellipse cx="3" cy="2.6" rx="1.4" ry="0.9" fill="#fff" opacity="0.35"/></g>
<line x1="56.7" y1="44.6" x2="56.7" y2="52" stroke="#c6c9cd" stroke-width="0.6"/>
<g transform="translate(60 43.9)"><path d="M3.90 3.70L3.90 1.30L1.50 3.70z" fill="#111"/><path d="M2.80 2.60L0.60 0.40" stroke="#111" stroke-width="1.1"/><path d="M5.30 3.70L5.30 1.30L7.70 3.70z" fill="#111"/><path d="M6.40 2.60L8.60 0.40" stroke="#111" stroke-width="1.1"/><path d="M3.90 5.10L3.90 7.50L1.50 5.10z" fill="#111"/><path d="M2.80 6.20L0.60 8.40" stroke="#111" stroke-width="1.1"/><path d="M5.30 5.10L5.30 7.50L7.70 5.10z" fill="#111"/><path d="M6.40 6.20L8.60 8.40" stroke="#111" stroke-width="1.1"/></g>
<g transform="translate(72.5 43.9)"><path d="M0.50 0.30L0.50 2.70L2.90 0.30z" fill="#111"/><path d="M1.60 1.40L3.70 3.50" stroke="#111" stroke-width="1.1"/><path d="M8.70 0.30L8.70 2.70L6.30 0.30z" fill="#111"/><path d="M7.60 1.40L5.50 3.50" stroke="#111" stroke-width="1.1"/><path d="M0.50 8.50L0.50 6.10L2.90 8.50z" fill="#111"/><path d="M1.60 7.40L3.70 5.30" stroke="#111" stroke-width="1.1"/><path d="M8.70 8.50L8.70 6.10L6.30 8.50z" fill="#111"/><path d="M7.60 7.40L5.50 5.30" stroke="#111" stroke-width="1.1"/></g>
<line x1="84.7" y1="44.6" x2="84.7" y2="52" stroke="#c6c9cd" stroke-width="0.6"/>
<g transform="translate(89.2 43.9)"><path d="M0.2 4.6l4.2-3.8v2.2h3.8v3.2h-3.8v2.2z" fill="#2f6fd8" stroke="#1c4a9c" stroke-width="0.4"/></g>
<g transform="translate(100.8 43.9)"><path d="M7.6 4.6l-4-3.6v2.1h-3.4v3h3.4v2.1z" fill="#cfd2d6"/></g>
<line x1="112" y1="44.6" x2="112" y2="52" stroke="#c6c9cd" stroke-width="0.6"/>
<g transform="translate(116.7 43.9)"><rect x="1.6" y="0.4" width="7" height="6" fill="#e6f3fb" stroke="#555" stroke-width="0.5"/><rect x="3.8" y="1.6" width="4" height="4" fill="#38b6e8"/><path d="M0.4 2l0.2 5.6l1.3-1.2l1 2l1-0.5l-1-2l1.6-0.2z" fill="#fff" stroke="#111" stroke-width="0.5"/></g>
<path d="M128.6 48.2h2.6l-1.3 1.5z" fill="#222"/>
<g transform="translate(136.7 43.9)"><rect x="0.4" y="0.8" width="5.2" height="5.6" fill="#eceeef" stroke="#c4c7cb" stroke-width="0.6"/><path d="M1.6 2h3v1.6" stroke="#c9ccd0" stroke-width="0.5" fill="none"/></g>
<line x1="147.5" y1="44.6" x2="147.5" y2="52" stroke="#c6c9cd" stroke-width="0.6"/>
<g transform="translate(152.5 43.9)"><path d="M0.6 0.6l0.2 7.2l1.7-1.6l1.2 2.6l1.2-0.5l-1.2-2.6l2.3-0.2z" fill="#111"/></g>
<line x1="162.5" y1="44.6" x2="162.5" y2="52" stroke="#c6c9cd" stroke-width="0.6"/>
<g transform="translate(165.8 43.9)"><circle cx="4.6" cy="4.6" r="4.3" fill="#2b6bd0" stroke="#1a468e" stroke-width="0.5"/><ellipse cx="4.6" cy="2.6" rx="3" ry="1.6" fill="#fff" opacity="0.25"/><rect x="4" y="3.8" width="1.3" height="3.4" fill="#fff"/><rect x="4" y="2" width="1.3" height="1.2" fill="#fff"/></g>
<g transform="translate(179 43.9)"><path d="M4.6 0.2l-3.4 5h2l-1.6 3.8l4.2-5.2h-2l2.2-3.6z" fill="#dcdfe2" stroke="#c4c7cb" stroke-width="0.4"/></g>
<g transform="translate(190.8 43.9)"><path d="M0.4 0.6h8.4v5.6h-5l-2 2v-2h-1.4z" fill="#f2f6fb" stroke="#5c6b80" stroke-width="0.6"/><rect x="3.2" y="2" width="3.6" height="2.8" fill="#5d9be6"/></g>
<line x1="203.3" y1="44.6" x2="203.3" y2="52" stroke="#c6c9cd" stroke-width="0.6"/>
<g transform="translate(206.7 43.9)"><rect x="0.3" y="5" width="8.6" height="3.2" fill="#d79a4a" stroke="#8a5a1e" stroke-width="0.4"/><path d="M1.6 5v1.4M3 5v1.4M4.4 5v1.4M5.8 5v1.4M7.2 5v1.4" stroke="#5c3a10" stroke-width="0.4"/><path d="M0.4 2.2h3M8.8 2.2h-3" stroke="#2b62c4" stroke-width="0.7"/><path d="M3.4 1v2.4l1.2-1.2zM5.8 1v2.4l-1.2-1.2z" fill="#2b62c4"/></g>
<line x1="219" y1="44.6" x2="219" y2="52" stroke="#c6c9cd" stroke-width="0.6"/>
<g transform="translate(222.5 43.9)"><path d="M1.4 0.6h2.2v2.2l0.6 0.2v5.4h-3.8v-4.4zM7.8 0.6h-2.2v2.2l-0.6 0.2v5.4h3.8v-4.4z" fill="#222"/><rect x="3.8" y="2.6" width="1.6" height="2.2" fill="#444"/></g>
<g transform="translate(235.5 43.9)"><rect x="3" y="3.4" width="5.6" height="5" fill="#dcebfa" stroke="#3a78d0" stroke-width="0.6"/><path d="M0.6 6.8v-4.2h5.4" fill="none" stroke="#2f6fd8" stroke-width="1.1"/><path d="M5.6 0.8l2.4 1.8l-2.4 1.8z" fill="#2f6fd8"/><rect x="0" y="6.2" width="1.6" height="1.6" fill="#2f6fd8"/></g>
<g transform="translate(248.8 43.9)"><circle cx="3" cy="2.2" r="1.9" fill="#eaf2fc" stroke="#2f6fd8" stroke-width="0.7"/><circle cx="3" cy="2.2" r="0.7" fill="#2f6fd8"/><path d="M3 4v1.4" stroke="#2f6fd8" stroke-width="0.7"/></g>
<text x="248.6" y="53" font-family="Liberation Sans, sans-serif" font-size="4.4" font-weight="bold" fill="#2456b4">XY</text>
<line x1="259.3" y1="44.6" x2="259.3" y2="52" stroke="#c6c9cd" stroke-width="0.6"/>
<g transform="translate(263 43.9)"><rect x="0.4" y="0.4" width="8.6" height="6.6" rx="0.6" fill="#eef0f1" stroke="#cdd0d3" stroke-width="0.6"/><circle cx="4.7" cy="4" r="2.2" fill="none" stroke="#d4d7da" stroke-width="0.6"/><path d="M4.7 2.6v1.4l1 0.8" stroke="#d4d7da" stroke-width="0.5" fill="none"/></g>
<line x1="275.5" y1="44.6" x2="275.5" y2="52" stroke="#c6c9cd" stroke-width="0.6"/>
<g transform="translate(278.8 43.9)"><rect x="0.4" y="0.4" width="8.4" height="6.4" fill="#fbfcfe" stroke="#39465a" stroke-width="0.7"/><rect x="0.4" y="0.4" width="8.4" height="1.5" fill="#39465a"/><rect x="2.6" y="3" width="2.6" height="2.4" fill="none" stroke="#444" stroke-width="0.5"/><path d="M5 5.4l2.4 2.8" stroke="#a03c2a" stroke-width="1"/></g>
<rect x="292.3" y="49.8" width="4" height="6" fill="#e3e3e3" stroke="#bdbdbd" stroke-width="0.4"/>
<rect x="293.1" y="51.3" width="2.4" height="0.7" fill="#222"/>
<path d="M293.0 52.8 h2.6 l-1.3 1.6z" fill="#222"/>
<g transform="translate(3.6 73)"><rect x="0.3" y="0.3" width="3" height="2.6" fill="#f2c64a" stroke="#9a7a1a" stroke-width="0.4"/><path d="M1.8 2.9v5.2h3M1.8 5.2h3" fill="none" stroke="#555" stroke-width="0.5"/><rect x="5" y="4.2" width="3.6" height="1.8" fill="#6aa6ee" stroke="#2c62b8" stroke-width="0.3"/><rect x="5" y="7.2" width="3.6" height="1.8" fill="#f2c64a" stroke="#9a7a1a" stroke-width="0.3"/></g>
<g transform="translate(16.6 72.6)"><path d="M0.6 6l4 3l4-3l-4-1.4z" fill="#f0c23c" stroke="#9a7a1a" stroke-width="0.4"/><path d="M2 1.4v5.2q2.4 1.2 5 0v-5.2z" fill="#d9dde3" stroke="#6b7480" stroke-width="0.5"/><ellipse cx="4.5" cy="1.4" rx="2.5" ry="0.9" fill="#f1f3f6" stroke="#6b7480" stroke-width="0.4"/></g>
<g transform="translate(28.4 72.6)"><path d="M0.4 6.4l4.2 2.6l4.2-2.6l-4.2-2.4z" fill="#f0c23c" stroke="#9a7a1a" stroke-width="0.4"/><path d="M0.4 4l4.2 2.6l4.2-2.6l-4.2-2.6z" fill="#fbfbfb" stroke="#8e8e8e" stroke-width="0.4"/></g>
<g transform="translate(40.6 72.6)"><path d="M0.4 6.6l4.2 2.6l4.2-2.6l-4.2-2z" fill="#f0c23c" stroke="#9a7a1a" stroke-width="0.4"/><rect x="2.2" y="0.4" width="5" height="6" fill="#eef3f9" stroke="#555" stroke-width="0.5"/><rect x="2.9" y="1.4" width="3.2" height="3.6" fill="#2aa6d8"/><path d="M1.6 3l0.1 3.6l0.9-0.8l0.7 1.3l0.6-0.3l-0.7-1.3l1.1-0.1z" fill="#111"/></g>
<line x1="53.8" y1="72.6" x2="53.8" y2="82.6" stroke="#c6c9cd" stroke-width="0.6"/>
<g transform="translate(57.4 73.6)"><rect x="0.4" y="0.3" width="6.8" height="7.6" fill="#fdfdfd" stroke="#7a8088" stroke-width="0.5"/><path d="M1.4 2h1.2M1.4 4.1h1.2M1.4 6.2h1.2" stroke="#333" stroke-width="0.9"/><path d="M3.6 2h2.8M3.6 4.1h2.8M3.6 6.2h2.8" stroke="#8a8f96" stroke-width="0.6"/></g>
<path d="M116.2 64.4h3.2M116.9 64.4v-3.4h1.8v3.4M117.8 64.4v2.2" fill="none" stroke="#222" stroke-width="0.6"/><path d="M118.3 61.00000000000001v3.4" stroke="#222" stroke-width="0.9"/>
<path d="M124.6 61.6l3.8 3.8M128.4 61.6l-3.8 3.8" stroke="#222" stroke-width="0.9"/>
<path d="M740.6 64.4h3.2M741.3000000000001 64.4v-3.4h1.8v3.4M742.2 64.4v2.2" fill="none" stroke="#222" stroke-width="0.6"/><path d="M742.7 61.00000000000001v3.4" stroke="#222" stroke-width="0.9"/>
<path d="M749.2 61.6l3.8 3.8M753.0 61.6l-3.8 3.8" stroke="#222" stroke-width="0.9"/>
<g transform="translate(13.6 87.6)"><path d="M0.4 6l3.6 1.4l4.6-1.4l-0.4-0.9l-4.2 1.2l-3.2-1.2z" fill="#e9b83a" stroke="#9a7418" stroke-width="0.35"/><path d="M0.4 4.2l3.6 1.4l4.6-1.4l-0.4-0.9l-4.2 1.2l-3.2-1.2z" fill="#f0c956" stroke="#9a7418" stroke-width="0.35"/><path d="M0.4 2.4l3.6 1.4l4.6-1.4l-3.6-1.6l-4.2 0.6z" fill="#f7dc86" stroke="#9a7418" stroke-width="0.35"/></g>
<path d="M26.4 101.4l1.7 1.9l2.8-4" fill="none" stroke="#111" stroke-width="1.1"/>
<path d="M26.4 121.5l1.7 1.9l2.8-4" fill="none" stroke="#111" stroke-width="1.1"/>
<path d="M26.4 142.2l1.7 1.9l2.8-4" fill="none" stroke="#111" stroke-width="1.1"/>
<path d="M610.8 64l2-2l2 2" fill="none" stroke="#444" stroke-width="0.9"/>
<path d="M610.8 389.6l2 2l2-2" fill="none" stroke="#444" stroke-width="0.9"/>
<path d="M748 78.5l2-2l2 2" fill="none" stroke="#444" stroke-width="0.9"/>
<path d="M748 399.4l2 2l2-2" fill="none" stroke="#444" stroke-width="0.9"/>
<path d="M182.6 398.7l-2 2l2 2" fill="none" stroke="#444" stroke-width="0.9"/>
<path d="M602.4 398.7l2 2l-2 2" fill="none" stroke="#444" stroke-width="0.9"/>
<g transform="translate(137.6 398)"><rect x="0.300" y="0.300" width="4.400" height="4.400" fill="#c6cc7a" stroke="#76863a" stroke-width="0.500"/><path d="M1 3.600l1.200-1.800l0.900 1.100l0.900-1.400" stroke="#f7f9ea" stroke-width="0.500" fill="none"/></g>
<g transform="translate(147 398)"><path d="M0.3 0.3h3.4l1.4 1.4v3.8h-4.8z" fill="#f4f4f4" stroke="#555" stroke-width="0.5"/><rect x="1.2" y="2.4" width="2.8" height="2.2" fill="#8a8f96"/></g>
<line x1="155.5" y1="397.4" x2="155.5" y2="404.4" stroke="#9a9ea3" stroke-width="0.6"/>
<g transform="translate(160.5 397.8)"><path d="M0.8 2.8a2.2 2.2 0 0 1 4-0.8M4.8 3.6a2.2 2.2 0 0 1-4 0.8" fill="none" stroke="#2f6fd8" stroke-width="1"/><path d="M5.4 0.4v2.2h-2.2zM0.2 6v-2.2h2.2z" fill="#2f6fd8"/></g>
<rect x="171.2" y="398.4" width="1.1" height="4.6" fill="#2f6fd8"/><rect x="173.4" y="398.4" width="1.1" height="4.6" fill="#2f6fd8"/>
<rect x="117.0" y="409.4" width="1.3" height="0.7" fill="#b8bcc2"/>
<rect x="117.0" y="411.6" width="1.3" height="0.7" fill="#b8bcc2"/>
<rect x="117.0" y="413.8" width="1.3" height="0.7" fill="#b8bcc2"/>
<rect x="117.0" y="416.0" width="1.3" height="0.7" fill="#b8bcc2"/>
<g transform="translate(121.4 408.8)"><path d="M0.4 0.4h5.4l2 2v6.4h-7.4z" fill="#f3f4f5" stroke="#b9bcc1" stroke-width="0.6"/><circle cx="5" cy="5" r="2.2" fill="#e6e8ea" stroke="#b9bcc1" stroke-width="0.6"/><path d="M6.6 6.6l2 2" stroke="#b9bcc1" stroke-width="0.9"/></g>
<g transform="translate(134.6 408.8)"><path d="M0.4 0.4h5.4l2 2v6.4h-7.4z" fill="#f3f4f5" stroke="#b9bcc1" stroke-width="0.6"/><circle cx="3" cy="4" r="2.2" fill="#e6e8ea" stroke="#b9bcc1" stroke-width="0.6"/><path d="M1 7.4h5" stroke="#b9bcc1" stroke-width="0.6"/></g>
<g transform="translate(147.4 408.8)"><path d="M0.4 0.4h5.4l2 2v6.4h-7.4z" fill="#f3f4f5" stroke="#b9bcc1" stroke-width="0.6"/><path d="M2 8v-4l1-2.4l1 2v-2.6l1 2.4l1-2v5" stroke="#b9bcc1" stroke-width="0.7" fill="#ececec"/></g>
<g transform="translate(159.4 408.8)"><path d="M0.4 0.4h5.4l2 2v6.4h-7.4z" fill="#f3f4f5" stroke="#b9bcc1" stroke-width="0.6"/><path d="M1.4 2l5 5M6.4 2l-5 5" stroke="#b9bcc1" stroke-width="0.8"/></g>
<g transform="translate(171.8 408.8)"><path d="M0.4 0.4h5.4l2 2v6.4h-7.4z" fill="#f3f4f5" stroke="#b9bcc1" stroke-width="0.6"/><rect x="1.6" y="2.6" width="4.8" height="4" fill="none" stroke="#b9bcc1" stroke-width="0.6"/><text x="2.3" y="6.1" font-size="3.4" fill="#b9bcc1" font-family="Liberation Sans, sans-serif">1:1</text></g>
<line x1="183.6" y1="409.6" x2="183.6" y2="417.4" stroke="#c6c9cd" stroke-width="0.6"/>
<g transform="translate(187.6 408.8)"><path d="M0.4 0.4h5.4l2 2v6.4h-7.4z" fill="#f3f4f5" stroke="#b9bcc1" stroke-width="0.6"/><path d="M2 2.6l1.6 1.6M6 2.6l-1.6 1.6M2 7l1.6-1.6M6 7l-1.6-1.6" stroke="#b9bcc1" stroke-width="0.9"/></g>
<g transform="translate(199.8 408.8)"><path d="M0.4 0.4h5.4l2 2v6.4h-7.4z" fill="#f3f4f5" stroke="#b9bcc1" stroke-width="0.6"/><path d="M3.4 4.2l-1.6-1.6M4.6 4.2l1.6-1.6M3.4 5.4l-1.6 1.6M4.6 5.4l1.6 1.6" stroke="#b9bcc1" stroke-width="0.9"/></g>
<line x1="211.6" y1="409.6" x2="211.6" y2="417.4" stroke="#c6c9cd" stroke-width="0.6"/>
<g transform="translate(215.2 408.8)"><path d="M0.4 0.4h5.4l2 2v6.4h-7.4z" fill="#f3f4f5" stroke="#b9bcc1" stroke-width="0.6"/><path d="M1.4 5l2.6-2.4v1.4h2.6v2h-2.6v1.4z" fill="#b9bcc1"/></g>
<g transform="translate(227.6 408.8)"><path d="M0.4 0.4h5.4l2 2v6.4h-7.4z" fill="#f3f4f5" stroke="#b9bcc1" stroke-width="0.6"/><path d="M6.8 5l-2.6-2.4v1.4h-2.6v2h2.6v1.4z" fill="#b9bcc1"/></g>
<path d="M264.4 412l1.8 1.8l1.8-1.8" fill="none" stroke="#8a9098" stroke-width="0.8"/>
<line x1="274" y1="409.6" x2="274" y2="417.4" stroke="#c6c9cd" stroke-width="0.6"/>
<rect x="276" y="408.2" width="11.4" height="10.2" fill="#d9e8f8" stroke="#6ea6e0" stroke-width="0.7"/>
<g transform="translate(277.8 409.2)"><path d="M0.4 0.4h5.2l2 2v5.8h-7.2z" fill="#fbfbfb" stroke="#a9adb3" stroke-width="0.6"/><rect x="1.6" y="3" width="4.4" height="3.6" fill="none" stroke="#b6bac0" stroke-width="0.5"/></g>
<g transform="translate(290.2 409.2)"><path d="M0.4 0.4h5.2l2 2v5.8h-7.2z" fill="#f6f6f6" stroke="#b9bcc1" stroke-width="0.6"/><path d="M1.6 3h4.4M1.6 4.6h4.4M1.6 6.2h3" stroke="#b9bcc1" stroke-width="0.5"/></g>
<g transform="translate(301.6 409)"><path d="M2 0.8h2v2l0.8 0.2v5.2h-4.4v-4.2zM8 0.8h-2v2l-0.8 0.2v5.2h4.4v-4.2z" fill="#27407a"/><rect x="4.2" y="2.6" width="1.6" height="2.2" fill="#3d5896"/><circle cx="2.6" cy="6" r="1.2" fill="#9ab4e6"/><circle cx="7.4" cy="6" r="1.2" fill="#9ab4e6"/></g>
<g transform="translate(314.2 409)"><path d="M0.4 0.4h4.6l1.6 1.6v5.4h-6.2z" fill="#fafafa" stroke="#6e747c" stroke-width="0.5"/><rect x="3" y="4.4" width="6" height="3" rx="0.5" fill="#9a9a9a" stroke="#555" stroke-width="0.4"/><rect x="4" y="6.4" width="4" height="2" fill="#e8eef8" stroke="#6a7a94" stroke-width="0.3"/></g>
<rect x="326.6" y="412.6" width="4" height="6" fill="#e3e3e3" stroke="#bdbdbd" stroke-width="0.4"/>
<rect x="327.40000000000003" y="414.1" width="2.4" height="0.7" fill="#222"/>
<path d="M327.3 415.6 h2.6 l-1.3 1.6z" fill="#222"/>
<g transform="translate(758.6 59.8)"><rect x="0.300" y="0.300" width="8.200" height="5.800" fill="#fbfcfe" stroke="#6a7a92" stroke-width="0.600"/><rect x="0.300" y="0.300" width="8.200" height="1.500" fill="#4a78c4"/><circle cx="5.600" cy="7.200" r="2.200" fill="#2f7ed8" stroke="#1d4f94" stroke-width="0.400"/><path d="M4.600 6.400q1-0.800 1.800 0.300q-0.300 1.200-1.400 0.900z" fill="#6cc43a"/></g>
<g transform="translate(1.2 0.8)"><circle cx="4.6" cy="5" r="4.4" fill="#1f6a8e"/><path d="M1.6 6.6q2.8 2.4 6 0.2q0.8-2-0.4-3.6q-1 2.6-5.600 3.400z" fill="#3f9a4a"/><circle cx="4.2" cy="3.8" r="2.5" fill="#bfe3f2" stroke="#e8f4fa" stroke-width="0.7"/><path d="M6 5.8l3.200 3.600" stroke="#b5642a" stroke-width="1.300" stroke-linecap="round"/></g>
<rect x="716.8" y="6.300" width="4.500" height="1.100" fill="#1c1c1c"/>
<rect x="731.200" y="4.100" width="4" height="3.600" fill="none" stroke="#1c1c1c" stroke-width="0.800"/><path d="M732.600 4v-1.400h4v3.600h-1.300" fill="none" stroke="#1c1c1c" stroke-width="0.800"/>
<rect x="741.600" y="0" width="25.100" height="10.500" fill="#c84f4f"/>
<path d="M752.300 3l4.500 4.500M756.800 3l-4.500 4.500" stroke="#fff" stroke-width="1.100"/>
<rect x="5.0" y="89.5" width="4.6" height="4.6" fill="#fcfcfd" stroke="#979faa" stroke-width="0.6"/>
<path d="M6.0 91.8h2.6" stroke="#4860a8" stroke-width="0.7"/>
<rect x="16.0" y="99.4" width="4.6" height="4.6" fill="#fcfcfd" stroke="#979faa" stroke-width="0.6"/>
<path d="M17.0 101.7h2.6" stroke="#4860a8" stroke-width="0.7"/>
<rect x="16.0" y="119.5" width="4.6" height="4.6" fill="#fcfcfd" stroke="#979faa" stroke-width="0.6"/>
<path d="M17.0 121.8h2.6" stroke="#4860a8" stroke-width="0.7"/>
<rect x="16.0" y="140.2" width="4.6" height="4.6" fill="#fcfcfd" stroke="#979faa" stroke-width="0.6"/>
<path d="M17.0 142.5h2.6" stroke="#4860a8" stroke-width="0.7"/>
<rect x="626.2" y="84.9" width="4.6" height="4.6" fill="#fcfcfd" stroke="#979faa" stroke-width="0.6"/>
<path d="M627.2 87.2h2.6" stroke="#4860a8" stroke-width="0.7"/>
<path d="M628.5 85.9v2.6" stroke="#4860a8" stroke-width="0.7"/>
<rect x="626.2" y="95.1" width="4.6" height="4.6" fill="#fcfcfd" stroke="#979faa" stroke-width="0.6"/>
<path d="M627.2 97.4h2.6" stroke="#4860a8" stroke-width="0.7"/>
<path d="M628.5 96.1v2.6" stroke="#4860a8" stroke-width="0.7"/>
<rect x="626.2" y="105.2" width="4.6" height="4.6" fill="#fcfcfd" stroke="#979faa" stroke-width="0.6"/>
<path d="M627.2 107.5h2.6" stroke="#4860a8" stroke-width="0.7"/>
<path d="M628.5 106.2v2.6" stroke="#4860a8" stroke-width="0.7"/>
<rect x="626.2" y="115.3" width="4.6" height="4.6" fill="#fcfcfd" stroke="#979faa" stroke-width="0.6"/>
<path d="M627.2 117.6h2.6" stroke="#4860a8" stroke-width="0.7"/>
<path d="M628.5 116.3v2.6" stroke="#4860a8" stroke-width="0.7"/>
<rect x="626.2" y="125.5" width="4.6" height="4.6" fill="#fcfcfd" stroke="#979faa" stroke-width="0.6"/>
<path d="M627.2 127.8h2.6" stroke="#4860a8" stroke-width="0.7"/>
<path d="M628.5 126.5v2.6" stroke="#4860a8" stroke-width="0.7"/>
<rect x="626.2" y="135.6" width="4.6" height="4.6" fill="#fcfcfd" stroke="#979faa" stroke-width="0.6"/>
<path d="M627.2 137.9h2.6" stroke="#4860a8" stroke-width="0.7"/>
<path d="M628.5 136.6v2.6" stroke="#4860a8" stroke-width="0.7"/>
<rect x="626.2" y="145.7" width="4.6" height="4.6" fill="#fcfcfd" stroke="#979faa" stroke-width="0.6"/>
<path d="M627.2 148.0h2.6" stroke="#4860a8" stroke-width="0.7"/>
<path d="M628.5 146.7v2.6" stroke="#4860a8" stroke-width="0.7"/>
<rect x="626.2" y="155.8" width="4.6" height="4.6" fill="#fcfcfd" stroke="#979faa" stroke-width="0.6"/>
<path d="M627.2 158.1h2.6" stroke="#4860a8" stroke-width="0.7"/>
<path d="M628.5 156.8v2.6" stroke="#4860a8" stroke-width="0.7"/>
<rect x="626.2" y="166.0" width="4.6" height="4.6" fill="#fcfcfd" stroke="#979faa" stroke-width="0.6"/>
<path d="M627.2 168.3h2.6" stroke="#4860a8" stroke-width="0.7"/>
<path d="M628.5 167.0v2.6" stroke="#4860a8" stroke-width="0.7"/>
<rect x="626.2" y="176.1" width="4.6" height="4.6" fill="#fcfcfd" stroke="#979faa" stroke-width="0.6"/>
<path d="M627.2 178.4h2.6" stroke="#4860a8" stroke-width="0.7"/>
<path d="M628.5 177.1v2.6" stroke="#4860a8" stroke-width="0.7"/>
<rect x="626.2" y="186.2" width="4.6" height="4.6" fill="#fcfcfd" stroke="#979faa" stroke-width="0.6"/>
<path d="M627.2 188.5h2.6" stroke="#4860a8" stroke-width="0.7"/>
<path d="M628.5 187.2v2.6" stroke="#4860a8" stroke-width="0.7"/>
<rect x="626.2" y="196.4" width="4.6" height="4.6" fill="#fcfcfd" stroke="#979faa" stroke-width="0.6"/>
<path d="M627.2 198.7h2.6" stroke="#4860a8" stroke-width="0.7"/>
<path d="M628.5 197.4v2.6" stroke="#4860a8" stroke-width="0.7"/>
<rect x="626.2" y="206.5" width="4.6" height="4.6" fill="#fcfcfd" stroke="#979faa" stroke-width="0.6"/>
<path d="M627.2 208.8h2.6" stroke="#4860a8" stroke-width="0.7"/>
<path d="M628.5 207.5v2.6" stroke="#4860a8" stroke-width="0.7"/>
<rect x="626.2" y="216.6" width="4.6" height="4.6" fill="#fcfcfd" stroke="#979faa" stroke-width="0.6"/>
<path d="M627.2 218.9h2.6" stroke="#4860a8" stroke-width="0.7"/>
<path d="M628.5 217.6v2.6" stroke="#4860a8" stroke-width="0.7"/>
<rect x="626.2" y="226.8" width="4.6" height="4.6" fill="#fcfcfd" stroke="#979faa" stroke-width="0.6"/>
<path d="M627.2 229.1h2.6" stroke="#4860a8" stroke-width="0.7"/>
<path d="M628.5 227.8v2.6" stroke="#4860a8" stroke-width="0.7"/>
<rect x="626.2" y="236.9" width="4.6" height="4.6" fill="#fcfcfd" stroke="#979faa" stroke-width="0.6"/>
<path d="M627.2 239.2h2.6" stroke="#4860a8" stroke-width="0.7"/>
<path d="M628.5 237.9v2.6" stroke="#4860a8" stroke-width="0.7"/>
<rect x="626.2" y="247.0" width="4.6" height="4.6" fill="#fcfcfd" stroke="#979faa" stroke-width="0.6"/>
<path d="M627.2 249.3h2.6" stroke="#4860a8" stroke-width="0.7"/>
<rect x="637.2" y="257.1" width="4.6" height="4.6" fill="#fcfcfd" stroke="#979faa" stroke-width="0.6"/>
<path d="M638.2 259.4h2.6" stroke="#4860a8" stroke-width="0.7"/>
<path d="M639.5 258.1v2.6" stroke="#4860a8" stroke-width="0.7"/>
<rect x="637.2" y="267.3" width="4.6" height="4.6" fill="#fcfcfd" stroke="#979faa" stroke-width="0.6"/>
<path d="M638.2 269.6h2.6" stroke="#4860a8" stroke-width="0.7"/>
<path d="M639.5 268.3v2.6" stroke="#4860a8" stroke-width="0.7"/>
<rect x="637.2" y="277.4" width="4.6" height="4.6" fill="#fcfcfd" stroke="#979faa" stroke-width="0.6"/>
<path d="M638.2 279.7h2.6" stroke="#4860a8" stroke-width="0.7"/>
<rect x="637.2" y="399.0" width="4.6" height="4.6" fill="#fcfcfd" stroke="#979faa" stroke-width="0.6"/>
<path d="M638.2 401.3h2.6" stroke="#4860a8" stroke-width="0.7"/>
<path d="M639.5 400.0v2.6" stroke="#4860a8" stroke-width="0.7"/>
<g transform="translate(624.4 72.5)"><path d="M0.2 7.400v-6.200h2.800l0.800 0.900h4v5.300z" fill="#d9b23a" stroke="#8e7418" stroke-width="0.400"/><rect x="1.400" y="3.800" width="5.400" height="3.600" rx="0.500" fill="#d8382c" stroke="#8e1e16" stroke-width="0.400"/><rect x="2.800" y="3" width="2.600" height="1.100" fill="none" stroke="#8e1e16" stroke-width="0.500"/><rect x="3.500" y="5" width="1.200" height="0.900" fill="#f6d6d2"/></g>
<g transform="translate(634 82.03)"><path d="M0.600 3.400l3-1.400l5.800 1.200v4.200l-3.200 1.600l-5.600-1.800z" fill="#d6362a" stroke="#8a1c14" stroke-width="0.450"/><path d="M6.200 5l3.200-1.800v4.200l-3.200 1.600z" fill="#a8241a"/><path d="M0.600 3.400l5.600 1.600l3.200-1.800M6.200 5v4" fill="none" stroke="#7a160f" stroke-width="0.400"/><path d="M2.600 2.600v-1.400l3.400-0.800l2 0.600v1.800" fill="none" stroke="#5a5f66" stroke-width="0.800"/><rect x="2.800" y="5" width="1.500" height="1.200" fill="#f3d0cc"/></g>
<g transform="translate(634 92.16000000000001)"><path d="M0.600 3.400l3-1.400l5.800 1.200v4.200l-3.200 1.600l-5.600-1.800z" fill="#d6362a" stroke="#8a1c14" stroke-width="0.450"/><path d="M6.200 5l3.200-1.800v4.200l-3.200 1.600z" fill="#a8241a"/><path d="M0.600 3.400l5.600 1.600l3.200-1.800M6.200 5v4" fill="none" stroke="#7a160f" stroke-width="0.400"/><path d="M2.600 2.600v-1.400l3.400-0.800l2 0.600v1.800" fill="none" stroke="#5a5f66" stroke-width="0.800"/><rect x="2.800" y="5" width="1.500" height="1.200" fill="#f3d0cc"/></g>
<g transform="translate(634 102.29)"><path d="M0.600 3.400l3-1.400l5.800 1.200v4.200l-3.200 1.600l-5.600-1.800z" fill="#d6362a" stroke="#8a1c14" stroke-width="0.450"/><path d="M6.200 5l3.200-1.800v4.200l-3.200 1.600z" fill="#a8241a"/><path d="M0.600 3.400l5.600 1.600l3.200-1.800M6.200 5v4" fill="none" stroke="#7a160f" stroke-width="0.400"/><path d="M2.600 2.600v-1.400l3.400-0.800l2 0.600v1.800" fill="none" stroke="#5a5f66" stroke-width="0.800"/><rect x="2.800" y="5" width="1.500" height="1.200" fill="#f3d0cc"/></g>
<g transform="translate(634 112.42000000000002)"><path d="M0.600 3.400l3-1.400l5.800 1.200v4.200l-3.200 1.600l-5.600-1.800z" fill="#d6362a" stroke="#8a1c14" stroke-width="0.450"/><path d="M6.200 5l3.200-1.800v4.200l-3.200 1.600z" fill="#a8241a"/><path d="M0.600 3.400l5.600 1.600l3.200-1.800M6.200 5v4" fill="none" stroke="#7a160f" stroke-width="0.400"/><path d="M2.600 2.600v-1.400l3.400-0.800l2 0.600v1.800" fill="none" stroke="#5a5f66" stroke-width="0.800"/><rect x="2.800" y="5" width="1.500" height="1.200" fill="#f3d0cc"/></g>
<g transform="translate(634 122.55000000000001)"><path d="M0.600 3.400l3-1.400l5.800 1.200v4.200l-3.200 1.600l-5.600-1.800z" fill="#d6362a" stroke="#8a1c14" stroke-width="0.450"/><path d="M6.200 5l3.200-1.800v4.200l-3.200 1.600z" fill="#a8241a"/><path d="M0.600 3.400l5.600 1.600l3.200-1.800M6.200 5v4" fill="none" stroke="#7a160f" stroke-width="0.400"/><path d="M2.600 2.600v-1.400l3.400-0.800l2 0.600v1.800" fill="none" stroke="#5a5f66" stroke-width="0.800"/><rect x="2.800" y="5" width="1.500" height="1.200" fill="#f3d0cc"/></g>
<g transform="translate(634 132.68)"><path d="M0.600 3.400l3-1.400l5.800 1.200v4.200l-3.200 1.600l-5.600-1.800z" fill="#d6362a" stroke="#8a1c14" stroke-width="0.450"/><path d="M6.200 5l3.200-1.800v4.200l-3.200 1.600z" fill="#a8241a"/><path d="M0.600 3.400l5.600 1.600l3.200-1.800M6.200 5v4" fill="none" stroke="#7a160f" stroke-width="0.400"/><path d="M2.600 2.600v-1.400l3.400-0.800l2 0.600v1.800" fill="none" stroke="#5a5f66" stroke-width="0.800"/><rect x="2.800" y="5" width="1.500" height="1.200" fill="#f3d0cc"/></g>
<g transform="translate(634 142.81000000000003)"><path d="M0.600 3.400l3-1.400l5.800 1.200v4.200l-3.200 1.600l-5.600-1.800z" fill="#d6362a" stroke="#8a1c14" stroke-width="0.450"/><path d="M6.200 5l3.200-1.800v4.200l-3.200 1.600z" fill="#a8241a"/><path d="M0.600 3.400l5.600 1.600l3.200-1.800M6.200 5v4" fill="none" stroke="#7a160f" stroke-width="0.400"/><path d="M2.600 2.600v-1.400l3.400-0.800l2 0.600v1.800" fill="none" stroke="#5a5f66" stroke-width="0.800"/><rect x="2.800" y="5" width="1.500" height="1.200" fill="#f3d0cc"/></g>
<g transform="translate(634 152.94000000000003)"><path d="M0.600 3.400l3-1.400l5.800 1.200v4.200l-3.200 1.600l-5.600-1.800z" fill="#d6362a" stroke="#8a1c14" stroke-width="0.450"/><path d="M6.200 5l3.200-1.800v4.200l-3.200 1.600z" fill="#a8241a"/><path d="M0.600 3.400l5.600 1.600l3.200-1.800M6.200 5v4" fill="none" stroke="#7a160f" stroke-width="0.400"/><path d="M2.600 2.600v-1.400l3.400-0.800l2 0.600v1.800" fill="none" stroke="#5a5f66" stroke-width="0.800"/><rect x="2.800" y="5" width="1.500" height="1.200" fill="#f3d0cc"/></g>
<g transform="translate(634 163.07000000000002)"><path d="M0.600 3.400l3-1.400l5.800 1.200v4.200l-3.200 1.600l-5.600-1.800z" fill="#d6362a" stroke="#8a1c14" stroke-width="0.450"/><path d="M6.200 5l3.200-1.800v4.200l-3.200 1.600z" fill="#a8241a"/><path d="M0.600 3.400l5.600 1.600l3.200-1.800M6.200 5v4" fill="none" stroke="#7a160f" stroke-width="0.400"/><path d="M2.600 2.600v-1.400l3.400-0.800l2 0.600v1.800" fill="none" stroke="#5a5f66" stroke-width="0.800"/><rect x="2.800" y="5" width="1.500" height="1.200" fill="#f3d0cc"/></g>
<g transform="translate(634 173.20000000000002)"><path d="M0.600 3.400l3-1.400l5.800 1.200v4.200l-3.200 1.600l-5.600-1.800z" fill="#d6362a" stroke="#8a1c14" stroke-width="0.450"/><path d="M6.200 5l3.200-1.800v4.200l-3.200 1.600z" fill="#a8241a"/><path d="M0.600 3.400l5.600 1.600l3.200-1.800M6.200 5v4" fill="none" stroke="#7a160f" stroke-width="0.400"/><path d="M2.600 2.600v-1.400l3.400-0.800l2 0.600v1.800" fill="none" stroke="#5a5f66" stroke-width="0.800"/><rect x="2.800" y="5" width="1.500" height="1.200" fill="#f3d0cc"/></g>
<g transform="translate(634 183.33)"><path d="M0.600 3.400l3-1.400l5.800 1.200v4.200l-3.200 1.600l-5.600-1.800z" fill="#d6362a" stroke="#8a1c14" stroke-width="0.450"/><path d="M6.200 5l3.200-1.800v4.200l-3.200 1.600z" fill="#a8241a"/><path d="M0.600 3.400l5.600 1.600l3.200-1.800M6.200 5v4" fill="none" stroke="#7a160f" stroke-width="0.400"/><path d="M2.600 2.600v-1.400l3.400-0.800l2 0.600v1.800" fill="none" stroke="#5a5f66" stroke-width="0.800"/><rect x="2.800" y="5" width="1.500" height="1.200" fill="#f3d0cc"/></g>
<g transform="translate(634 193.46)"><path d="M0.600 3.400l3-1.400l5.800 1.200v4.200l-3.200 1.600l-5.600-1.800z" fill="#d6362a" stroke="#8a1c14" stroke-width="0.450"/><path d="M6.200 5l3.200-1.800v4.200l-3.200 1.600z" fill="#a8241a"/><path d="M0.600 3.400l5.600 1.600l3.200-1.800M6.200 5v4" fill="none" stroke="#7a160f" stroke-width="0.400"/><path d="M2.600 2.600v-1.400l3.400-0.800l2 0.600v1.800" fill="none" stroke="#5a5f66" stroke-width="0.800"/><rect x="2.800" y="5" width="1.500" height="1.200" fill="#f3d0cc"/></g>
<g transform="translate(634 203.59)"><path d="M0.600 3.400l3-1.400l5.800 1.200v4.200l-3.200 1.600l-5.600-1.800z" fill="#d6362a" stroke="#8a1c14" stroke-width="0.450"/><path d="M6.200 5l3.200-1.800v4.200l-3.200 1.600z" fill="#a8241a"/><path d="M0.600 3.400l5.600 1.600l3.200-1.800M6.200 5v4" fill="none" stroke="#7a160f" stroke-width="0.400"/><path d="M2.600 2.600v-1.400l3.400-0.800l2 0.600v1.800" fill="none" stroke="#5a5f66" stroke-width="0.800"/><rect x="2.800" y="5" width="1.500" height="1.200" fill="#f3d0cc"/></g>
<g transform="translate(634 213.72000000000003)"><path d="M0.600 3.400l3-1.400l5.800 1.200v4.200l-3.200 1.600l-5.600-1.800z" fill="#d6362a" stroke="#8a1c14" stroke-width="0.450"/><path d="M6.200 5l3.200-1.800v4.200l-3.200 1.600z" fill="#a8241a"/><path d="M0.600 3.400l5.600 1.600l3.200-1.800M6.200 5v4" fill="none" stroke="#7a160f" stroke-width="0.400"/><path d="M2.600 2.600v-1.400l3.400-0.800l2 0.600v1.800" fill="none" stroke="#5a5f66" stroke-width="0.800"/><rect x="2.800" y="5" width="1.500" height="1.200" fill="#f3d0cc"/></g>
<g transform="translate(634 223.85000000000002)"><path d="M0.600 3.400l3-1.400l5.800 1.200v4.200l-3.200 1.600l-5.600-1.800z" fill="#d6362a" stroke="#8a1c14" stroke-width="0.450"/><path d="M6.200 5l3.200-1.800v4.200l-3.200 1.600z" fill="#a8241a"/><path d="M0.600 3.400l5.600 1.600l3.200-1.800M6.200 5v4" fill="none" stroke="#7a160f" stroke-width="0.400"/><path d="M2.600 2.600v-1.400l3.400-0.800l2 0.600v1.800" fill="none" stroke="#5a5f66" stroke-width="0.800"/><rect x="2.800" y="5" width="1.500" height="1.200" fill="#f3d0cc"/></g>
<g transform="translate(634 233.98000000000002)"><path d="M0.600 3.400l3-1.400l5.800 1.200v4.200l-3.200 1.600l-5.600-1.800z" fill="#d6362a" stroke="#8a1c14" stroke-width="0.450"/><path d="M6.200 5l3.200-1.800v4.200l-3.200 1.600z" fill="#a8241a"/><path d="M0.600 3.400l5.600 1.600l3.200-1.800M6.200 5v4" fill="none" stroke="#7a160f" stroke-width="0.400"/><path d="M2.600 2.600v-1.400l3.400-0.800l2 0.600v1.800" fill="none" stroke="#5a5f66" stroke-width="0.800"/><rect x="2.800" y="5" width="1.500" height="1.200" fill="#f3d0cc"/></g>
<g transform="translate(634 244.11)"><path d="M0.600 3.400l3-1.400l5.800 1.200v4.200l-3.200 1.600l-5.600-1.800z" fill="#d6362a" stroke="#8a1c14" stroke-width="0.450"/><path d="M6.200 5l3.200-1.800v4.200l-3.200 1.600z" fill="#a8241a"/><path d="M0.600 3.400l5.600 1.600l3.200-1.800M6.200 5v4" fill="none" stroke="#7a160f" stroke-width="0.400"/><path d="M2.600 2.600v-1.400l3.400-0.800l2 0.600v1.800" fill="none" stroke="#5a5f66" stroke-width="0.800"/><rect x="2.800" y="5" width="1.500" height="1.200" fill="#f3d0cc"/></g>
<g transform="translate(644.6 255.24000000000004)"><path d="M0.300 3.400l2.400-1l6.600 1.600v2.400l-2.400 1.400l-6.600-1.800z" fill="#d6362a" stroke="#7e1a12" stroke-width="0.450"/><path d="M0.300 3.400l6.600 1.800l2.400-1.200" fill="none" stroke="#7e1a12" stroke-width="0.400"/><path d="M1 1.800l2-1.400l5.600 2.200l-0.700 1l-4.700-1.700l-1.300 0.900z" fill="#e4e4e4" stroke="#3a3a3a" stroke-width="0.450"/></g>
<g transform="translate(644.6 265.37)"><path d="M0.300 3.400l2.400-1l6.600 1.600v2.400l-2.400 1.400l-6.600-1.800z" fill="#d6362a" stroke="#7e1a12" stroke-width="0.450"/><path d="M0.300 3.400l6.600 1.800l2.400-1.200" fill="none" stroke="#7e1a12" stroke-width="0.400"/><path d="M1 1.800l2-1.400l5.600 2.200l-0.700 1l-4.700-1.700l-1.300 0.900z" fill="#e4e4e4" stroke="#3a3a3a" stroke-width="0.450"/></g>
<g transform="translate(644.6 275.5)"><path d="M0.300 3.400l2.400-1l6.600 1.600v2.400l-2.400 1.400l-6.600-1.800z" fill="#d6362a" stroke="#7e1a12" stroke-width="0.450"/><path d="M0.300 3.400l6.600 1.800l2.400-1.200" fill="none" stroke="#7e1a12" stroke-width="0.400"/><path d="M1 1.800l2-1.400l5.600 2.200l-0.700 1l-4.700-1.700l-1.300 0.900z" fill="#e4e4e4" stroke="#3a3a3a" stroke-width="0.450"/></g>
<g transform="translate(655.6 285.03000000000003)"><path d="M3.800 2.600l5.400 5l-0.700 0.800l-5.500-4.900z" fill="#cdb98e" stroke="#8e7a52" stroke-width="0.300"/><path d="M0.800 2.600l2.800-2.200l1.800 0.300l1.600 1.300l-0.600 0.700l-1.500-1l-0.900 0.200l-2.300 1.700z" fill="#55595f" stroke="#2c2f34" stroke-width="0.300"/></g>
<g transform="translate(655.6 295.16)"><path d="M3.800 2.600l5.400 5l-0.700 0.800l-5.500-4.900z" fill="#cdb98e" stroke="#8e7a52" stroke-width="0.300"/><path d="M0.800 2.600l2.800-2.200l1.800 0.300l1.600 1.300l-0.600 0.700l-1.500-1l-0.900 0.200l-2.300 1.700z" fill="#55595f" stroke="#2c2f34" stroke-width="0.300"/></g>
<g transform="translate(655.6 305.29)"><path d="M3.800 2.600l5.400 5l-0.700 0.800l-5.500-4.900z" fill="#cdb98e" stroke="#8e7a52" stroke-width="0.300"/><path d="M0.800 2.600l2.800-2.200l1.800 0.300l1.600 1.300l-0.600 0.700l-1.500-1l-0.900 0.200l-2.300 1.700z" fill="#55595f" stroke="#2c2f34" stroke-width="0.300"/></g>
<g transform="translate(655.6 315.42)"><path d="M3.800 2.600l5.400 5l-0.700 0.800l-5.500-4.900z" fill="#cdb98e" stroke="#8e7a52" stroke-width="0.300"/><path d="M0.800 2.600l2.800-2.200l1.800 0.300l1.600 1.300l-0.600 0.700l-1.500-1l-0.900 0.200l-2.300 1.700z" fill="#55595f" stroke="#2c2f34" stroke-width="0.300"/></g>
<g transform="translate(655.6 325.55)"><path d="M3.800 2.600l5.400 5l-0.700 0.800l-5.500-4.900z" fill="#cdb98e" stroke="#8e7a52" stroke-width="0.300"/><path d="M0.800 2.600l2.800-2.200l1.800 0.300l1.600 1.300l-0.600 0.700l-1.500-1l-0.900 0.200l-2.300 1.700z" fill="#55595f" stroke="#2c2f34" stroke-width="0.300"/></g>
<g transform="translate(655.6 335.68)"><path d="M3.800 2.600l5.400 5l-0.700 0.800l-5.500-4.900z" fill="#cdb98e" stroke="#8e7a52" stroke-width="0.300"/><path d="M0.800 2.600l2.800-2.200l1.800 0.300l1.600 1.300l-0.600 0.700l-1.500-1l-0.900 0.200l-2.300 1.700z" fill="#55595f" stroke="#2c2f34" stroke-width="0.300"/></g>
<g transform="translate(655.6 345.81000000000006)"><path d="M3.800 2.600l5.400 5l-0.700 0.800l-5.500-4.900z" fill="#cdb98e" stroke="#8e7a52" stroke-width="0.300"/><path d="M0.800 2.600l2.800-2.200l1.800 0.300l1.600 1.300l-0.600 0.700l-1.500-1l-0.900 0.200l-2.300 1.700z" fill="#55595f" stroke="#2c2f34" stroke-width="0.300"/></g>
<g transform="translate(655.6 355.94000000000005)"><path d="M3.800 2.600l5.400 5l-0.700 0.800l-5.500-4.900z" fill="#cdb98e" stroke="#8e7a52" stroke-width="0.300"/><path d="M0.800 2.600l2.800-2.200l1.800 0.300l1.600 1.300l-0.600 0.700l-1.500-1l-0.900 0.200l-2.300 1.700z" fill="#55595f" stroke="#2c2f34" stroke-width="0.300"/></g>
<g transform="translate(655.6 366.07000000000005)"><path d="M3.800 2.600l5.400 5l-0.700 0.800l-5.500-4.900z" fill="#cdb98e" stroke="#8e7a52" stroke-width="0.300"/><path d="M0.800 2.600l2.800-2.200l1.800 0.300l1.600 1.300l-0.600 0.700l-1.500-1l-0.900 0.200l-2.300 1.700z" fill="#55595f" stroke="#2c2f34" stroke-width="0.300"/></g>
<g transform="translate(655.6 376.20000000000005)"><path d="M3.800 2.600l5.400 5l-0.700 0.800l-5.500-4.900z" fill="#cdb98e" stroke="#8e7a52" stroke-width="0.300"/><path d="M0.800 2.600l2.800-2.200l1.800 0.300l1.600 1.300l-0.600 0.700l-1.500-1l-0.900 0.200l-2.300 1.700z" fill="#55595f" stroke="#2c2f34" stroke-width="0.300"/></g>
<g transform="translate(655.6 386.33000000000004)"><path d="M3.800 2.600l5.400 5l-0.700 0.800l-5.500-4.900z" fill="#cdb98e" stroke="#8e7a52" stroke-width="0.300"/><path d="M0.800 2.600l2.800-2.200l1.800 0.300l1.600 1.300l-0.600 0.700l-1.500-1l-0.900 0.200l-2.300 1.700z" fill="#55595f" stroke="#2c2f34" stroke-width="0.300"/></g>
<g transform="translate(644.6 397.06)"><path d="M0.300 3.400l2.400-1l6.600 1.600v2.400l-2.400 1.400l-6.600-1.800z" fill="#d6362a" stroke="#7e1a12" stroke-width="0.450"/><path d="M0.300 3.400l6.600 1.800l2.400-1.200" fill="none" stroke="#7e1a12" stroke-width="0.400"/><path d="M1 1.800l2-1.400l5.600 2.200l-0.700 1l-4.700-1.700l-1.300 0.900z" fill="#e4e4e4" stroke="#3a3a3a" stroke-width="0.450"/></g>
</svg>
</body></html>
